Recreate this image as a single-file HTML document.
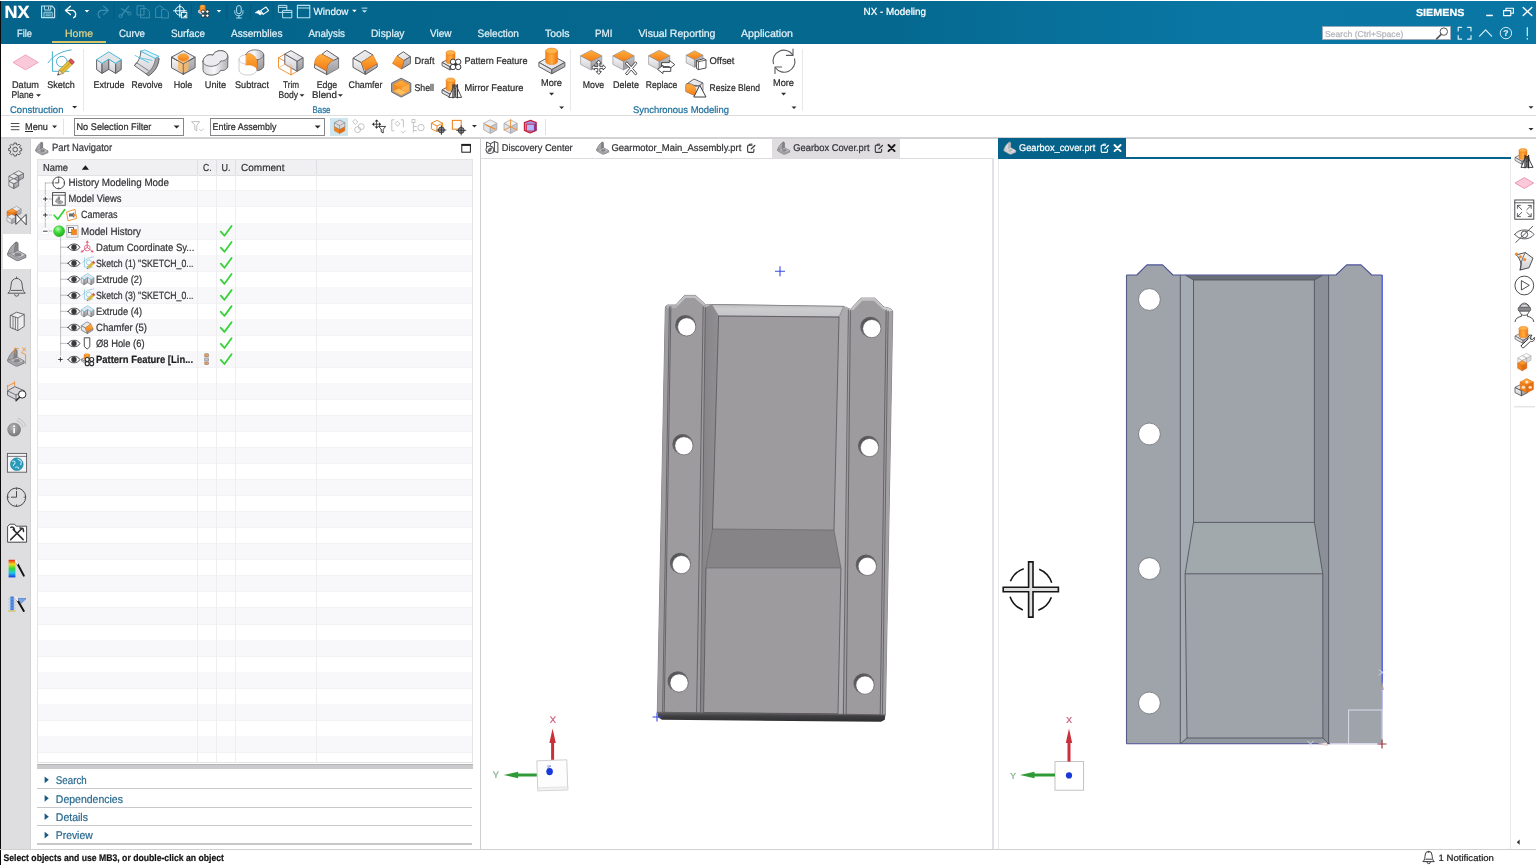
<!DOCTYPE html>
<html lang="en"><head><meta charset="utf-8"><title>NX - Modeling</title>
<style>
html,body{margin:0;padding:0;background:#fff;}
html{overflow:hidden;}
body{width:1536px;height:865px;position:relative;overflow:hidden;font-family:"Liberation Sans",sans-serif;}
#app{position:absolute;left:-8px;top:-8px;width:1552px;height:881px;background:#fff;filter:blur(0.45px);}
#in{position:absolute;left:8px;top:8px;width:1536px;height:865px;}
.b{position:absolute;display:block;}
.t{position:absolute;white-space:nowrap;display:block;transform-origin:0 0;text-rendering:geometricPrecision;line-height:20px;-webkit-text-stroke:0.22px currentColor;}
svg{overflow:visible;}
</style></head><body><div id="app"><div id="in">
<div class="b" style="left:0px;top:0px;width:1536px;height:865px;background:#ffffff;"></div>
<div class="b" style="left:-8px;top:1px;width:8px;height:43px;background:#04648b;"></div>
<div class="b" style="left:1536px;top:1px;width:8px;height:43px;background:#0a76a3;"></div>
<div class="b" style="left:0px;top:1px;width:1536px;height:43px;background:linear-gradient(90deg,#04648b 0%,#05678e 35%,#05698f 58%,#07709b 69%,#0a77a4 81%,#0a76a3 100%);"></div>
<div class="b" style="left:0px;top:0px;width:1536px;height:1px;background:#ffffff;"></div>
<div class="b" style="left:0px;top:115px;width:1544px;height:1px;background:#dcdcdc;"></div>
<div class="b" style="left:0px;top:136.9px;width:1544px;height:1.8px;background:#d3d3d6;"></div>
<div class="b" style="left:-8px;top:1px;width:9px;height:872px;background:#0a0a0a;"></div>
<div class="b" style="left:1px;top:139px;width:29px;height:711px;background:#dedde0;"></div>
<div class="b" style="left:30px;top:139px;width:1px;height:711px;background:#d2d2d2;"></div>
<div class="b" style="left:3.2px;top:233.9px;width:27.8px;height:34.8px;background:#ffffff;"></div>
<div class="b" style="left:0px;top:849px;width:1544px;height:1px;background:#d0d0d0;"></div>
<div class="b" style="left:1px;top:850px;width:1535px;height:15px;background:#ffffff;"></div>
<span class="t " style="left:4px;top:2px;font-size:17.6px;color:#ffffff;font-weight:bold;transform:translateX(0.50px) scaleX(1.0225);">NX</span>
<span class="t " style="left:313px;top:3px;font-size:10.2px;color:#e8f4f9;transform:translateX(0.50px) scaleX(0.9648);">Window</span>
<span class="t " style="left:863px;top:3px;font-size:10.2px;color:#ffffff;transform:translateX(0.55px) scaleX(0.9671);">NX - Modeling</span>
<span class="t " style="left:1415px;top:4px;font-size:10.2px;color:#ffffff;font-weight:bold;transform:translateX(0.90px) scaleX(1.0564);">SIEMENS</span>
<span class="t " style="left:17px;top:24px;font-size:10.7px;color:#e2f1f7;transform:scaleX(0.8701);">File</span>
<span class="t " style="left:65px;top:24px;font-size:10.7px;color:#e4d488;transform:scaleX(0.9811);">Home</span>
<span class="t " style="left:119px;top:24px;font-size:10.7px;color:#e2f1f7;transform:scaleX(0.9110);">Curve</span>
<span class="t " style="left:171px;top:24px;font-size:10.7px;color:#e2f1f7;transform:scaleX(0.9221);">Surface</span>
<span class="t " style="left:231px;top:24px;font-size:10.7px;color:#e2f1f7;transform:scaleX(0.9414);">Assemblies</span>
<span class="t " style="left:308px;top:24px;font-size:10.7px;color:#e2f1f7;transform:translateX(0.50px) scaleX(0.9161);">Analysis</span>
<span class="t " style="left:371px;top:24px;font-size:10.7px;color:#e2f1f7;transform:scaleX(0.9549);">Display</span>
<span class="t " style="left:430px;top:24px;font-size:10.7px;color:#e2f1f7;transform:scaleX(0.9349);">View</span>
<span class="t " style="left:477px;top:24px;font-size:10.7px;color:#e2f1f7;transform:translateX(0.50px) scaleX(0.9429);">Selection</span>
<span class="t " style="left:545px;top:24px;font-size:10.7px;color:#e2f1f7;transform:scaleX(0.9809);">Tools</span>
<span class="t " style="left:595px;top:24px;font-size:10.7px;color:#e2f1f7;transform:scaleX(0.9200);">PMI</span>
<span class="t " style="left:638px;top:24px;font-size:10.7px;color:#e2f1f7;transform:translateX(0.50px) scaleX(0.9832);">Visual Reporting</span>
<span class="t " style="left:741px;top:24px;font-size:10.7px;color:#e2f1f7;transform:scaleX(0.9934);">Application</span>
<div class="b" style="left:52px;top:41px;width:54px;height:1.9px;background:#d8c468;"></div>
<div class="b" style="left:1322px;top:26px;width:129px;height:14px;background:#ffffff;border:1px solid #9ab;box-sizing:border-box;"></div>
<span class="t " style="left:1325px;top:24px;font-size:8.6px;color:#b4b4ba;transform:scaleX(1.0033);">Search (Ctrl+Space)</span>
<span class="t " style="left:1503px;top:23px;font-size:8.6px;color:#d6edf6;font-weight:bold;transform:translateX(0.27px);">?</span>
<span class="t " style="left:12px;top:76px;font-size:9.7px;color:#2b2b2b;transform:scaleX(0.9451);">Datum</span>
<span class="t " style="left:11px;top:86px;font-size:9.7px;color:#2b2b2b;transform:translateX(0.50px) scaleX(0.8868);">Plane</span>
<span class="t " style="left:47px;top:76px;font-size:9.7px;color:#2b2b2b;transform:translateX(0.25px) scaleX(0.9274);">Sketch</span>
<span class="t " style="left:93px;top:76px;font-size:9.7px;color:#2b2b2b;transform:translateX(0.50px) scaleX(0.9274);">Extrude</span>
<span class="t " style="left:131px;top:76px;font-size:9.7px;color:#2b2b2b;transform:translateX(0.50px) scaleX(0.8846);">Revolve</span>
<span class="t " style="left:173px;top:76px;font-size:9.7px;color:#2b2b2b;transform:translateX(0.75px) scaleX(0.9274);">Hole</span>
<span class="t " style="left:204px;top:76px;font-size:9.7px;color:#2b2b2b;transform:translateX(0.75px) scaleX(0.9495);">Unite</span>
<span class="t " style="left:235px;top:76px;font-size:9.7px;color:#2b2b2b;transform:scaleX(0.9413);">Subtract</span>
<span class="t " style="left:283px;top:76px;font-size:9.7px;color:#2b2b2b;transform:scaleX(0.8408);">Trim</span>
<span class="t " style="left:278px;top:86px;font-size:9.7px;color:#2b2b2b;transform:translateX(0.50px) scaleX(0.8820);">Body</span>
<span class="t " style="left:316px;top:76px;font-size:9.7px;color:#2b2b2b;transform:translateX(0.75px) scaleX(0.9050);">Edge</span>
<span class="t " style="left:312px;top:86px;font-size:9.7px;color:#2b2b2b;transform:scaleX(1.0077);">Blend</span>
<span class="t " style="left:348px;top:76px;font-size:9.7px;color:#2b2b2b;transform:translateX(0.50px) scaleX(0.9142);">Chamfer</span>
<span class="t " style="left:414px;top:52px;font-size:9.7px;color:#2b2b2b;transform:translateX(0.50px) scaleX(0.9515);">Draft</span>
<span class="t " style="left:414px;top:79px;font-size:9.7px;color:#2b2b2b;transform:translateX(0.50px) scaleX(0.9041);">Shell</span>
<span class="t " style="left:464px;top:52px;font-size:9.7px;color:#2b2b2b;transform:translateX(0.50px) scaleX(0.9348);">Pattern Feature</span>
<span class="t " style="left:464px;top:79px;font-size:9.7px;color:#2b2b2b;transform:translateX(0.50px) scaleX(0.9603);">Mirror Feature</span>
<span class="t " style="left:541px;top:74px;font-size:9.7px;color:#2b2b2b;transform:scaleX(0.9503);">More</span>
<span class="t " style="left:582px;top:76px;font-size:9.7px;color:#2b2b2b;transform:translateX(0.75px) scaleX(0.9065);">Move</span>
<span class="t " style="left:613px;top:76px;font-size:9.7px;color:#2b2b2b;transform:scaleX(0.9273);">Delete</span>
<span class="t " style="left:645px;top:76px;font-size:9.7px;color:#2b2b2b;transform:translateX(0.75px) scaleX(0.8852);">Replace</span>
<span class="t " style="left:709px;top:52px;font-size:9.7px;color:#2b2b2b;transform:translateX(0.50px) scaleX(0.9729);">Offset</span>
<span class="t " style="left:709px;top:79px;font-size:9.7px;color:#2b2b2b;transform:translateX(0.50px) scaleX(0.8836);">Resize Blend</span>
<span class="t " style="left:773px;top:74px;font-size:9.7px;color:#2b2b2b;transform:scaleX(0.9503);">More</span>
<span class="t " style="left:10px;top:101px;font-size:9.7px;color:#1e6f9e;transform:scaleX(0.9825);">Construction</span>
<span class="t " style="left:312px;top:101px;font-size:9.7px;color:#1e6f9e;transform:translateX(0.50px) scaleX(0.8142);">Base</span>
<span class="t " style="left:633px;top:101px;font-size:9.7px;color:#1e6f9e;transform:scaleX(0.9729);">Synchronous Modeling</span>
<div class="b" style="left:83px;top:49px;width:1px;height:62px;background:#e8e8ec;"></div>
<div class="b" style="left:570px;top:49px;width:1px;height:62px;background:#e8e8ec;"></div>
<div class="b" style="left:802px;top:49px;width:1px;height:62px;background:#e8e8ec;"></div>
<span class="t " style="left:25px;top:118px;font-size:9.7px;color:#2b2b2b;transform:scaleX(0.9480);">Menu</span>
<div class="b" style="left:25px;top:130.8px;width:7.5px;height:0.9px;background:#2b2b2b;"></div>
<div class="b" style="left:63px;top:119px;width:1px;height:16px;background:#e4e4e6;"></div>
<div class="b" style="left:73.5px;top:118.2px;width:110px;height:17.4px;background:#ffffff;border:1px solid #85858a;box-sizing:border-box;"></div>
<span class="t " style="left:76px;top:118px;font-size:9.7px;color:#2b2b2b;transform:translateX(0.50px) scaleX(0.9464);">No Selection Filter</span>
<div class="b" style="left:210px;top:118.2px;width:114.5px;height:17.4px;background:#ffffff;border:1px solid #85858a;box-sizing:border-box;"></div>
<span class="t " style="left:212px;top:118px;font-size:9.7px;color:#2b2b2b;transform:translateX(0.50px) scaleX(0.9203);">Entire Assembly</span>
<div class="b" style="left:330px;top:118px;width:18px;height:18px;background:#cfe6ee;"></div>
<div class="b" style="left:545px;top:119px;width:1px;height:16px;background:#e1e1e1;"></div>
<span class="t " style="left:52px;top:138px;font-size:10.5px;color:#343438;transform:scaleX(0.8971);">Part Navigator</span>
<div class="b" style="left:37px;top:159px;width:436px;height:604px;background:#ffffff;border:1px solid #e4e4e4;box-sizing:border-box;"></div>
<div class="b" style="left:38px;top:160px;width:434px;height:14.5px;background:#f0eff1;"></div>
<div class="b" style="left:38px;top:174.5px;width:434px;height:1px;background:#e2e2e2;"></div>
<div class="b" style="left:38px;top:190.4px;width:434px;height:1px;background:#f3f3f5;"></div>
<div class="b" style="left:38px;top:190.9px;width:434px;height:16px;background:#f8f8fa;"></div>
<div class="b" style="left:38px;top:206.4px;width:434px;height:1px;background:#f3f3f5;"></div>
<div class="b" style="left:38px;top:222.5px;width:434px;height:1px;background:#f3f3f5;"></div>
<div class="b" style="left:38px;top:223.0px;width:434px;height:16px;background:#f8f8fa;"></div>
<div class="b" style="left:38px;top:238.5px;width:434px;height:1px;background:#f3f3f5;"></div>
<div class="b" style="left:38px;top:254.6px;width:434px;height:1px;background:#f3f3f5;"></div>
<div class="b" style="left:38px;top:255.1px;width:434px;height:16px;background:#f8f8fa;"></div>
<div class="b" style="left:38px;top:270.6px;width:434px;height:1px;background:#f3f3f5;"></div>
<div class="b" style="left:38px;top:286.6px;width:434px;height:1px;background:#f3f3f5;"></div>
<div class="b" style="left:38px;top:287.2px;width:434px;height:16px;background:#f8f8fa;"></div>
<div class="b" style="left:38px;top:302.7px;width:434px;height:1px;background:#f3f3f5;"></div>
<div class="b" style="left:38px;top:318.7px;width:434px;height:1px;background:#f3f3f5;"></div>
<div class="b" style="left:38px;top:319.3px;width:434px;height:16px;background:#f8f8fa;"></div>
<div class="b" style="left:38px;top:334.8px;width:434px;height:1px;background:#f3f3f5;"></div>
<div class="b" style="left:38px;top:350.8px;width:434px;height:1px;background:#f3f3f5;"></div>
<div class="b" style="left:38px;top:351.3px;width:434px;height:16px;background:#f8f8fa;"></div>
<div class="b" style="left:38px;top:366.8px;width:434px;height:1px;background:#f3f3f5;"></div>
<div class="b" style="left:38px;top:382.9px;width:434px;height:1px;background:#f3f3f5;"></div>
<div class="b" style="left:38px;top:383.4px;width:434px;height:16px;background:#f8f8fa;"></div>
<div class="b" style="left:38px;top:398.9px;width:434px;height:1px;background:#f3f3f5;"></div>
<div class="b" style="left:38px;top:415.0px;width:434px;height:1px;background:#f3f3f5;"></div>
<div class="b" style="left:38px;top:415.5px;width:434px;height:16px;background:#f8f8fa;"></div>
<div class="b" style="left:38px;top:431.0px;width:434px;height:1px;background:#f3f3f5;"></div>
<div class="b" style="left:38px;top:447.0px;width:434px;height:1px;background:#f3f3f5;"></div>
<div class="b" style="left:38px;top:447.6px;width:434px;height:16px;background:#f8f8fa;"></div>
<div class="b" style="left:38px;top:463.1px;width:434px;height:1px;background:#f3f3f5;"></div>
<div class="b" style="left:38px;top:479.1px;width:434px;height:1px;background:#f3f3f5;"></div>
<div class="b" style="left:38px;top:479.7px;width:434px;height:16px;background:#f8f8fa;"></div>
<div class="b" style="left:38px;top:495.2px;width:434px;height:1px;background:#f3f3f5;"></div>
<div class="b" style="left:38px;top:511.2px;width:434px;height:1px;background:#f3f3f5;"></div>
<div class="b" style="left:38px;top:511.7px;width:434px;height:16px;background:#f8f8fa;"></div>
<div class="b" style="left:38px;top:527.2px;width:434px;height:1px;background:#f3f3f5;"></div>
<div class="b" style="left:38px;top:543.3px;width:434px;height:1px;background:#f3f3f5;"></div>
<div class="b" style="left:38px;top:543.8px;width:434px;height:16px;background:#f8f8fa;"></div>
<div class="b" style="left:38px;top:559.3px;width:434px;height:1px;background:#f3f3f5;"></div>
<div class="b" style="left:38px;top:575.4px;width:434px;height:1px;background:#f3f3f5;"></div>
<div class="b" style="left:38px;top:575.9px;width:434px;height:16px;background:#f8f8fa;"></div>
<div class="b" style="left:38px;top:591.4px;width:434px;height:1px;background:#f3f3f5;"></div>
<div class="b" style="left:38px;top:607.4px;width:434px;height:1px;background:#f3f3f5;"></div>
<div class="b" style="left:38px;top:608.0px;width:434px;height:16px;background:#f8f8fa;"></div>
<div class="b" style="left:38px;top:623.5px;width:434px;height:1px;background:#f3f3f5;"></div>
<div class="b" style="left:38px;top:639.5px;width:434px;height:1px;background:#f3f3f5;"></div>
<div class="b" style="left:38px;top:640.1px;width:434px;height:16px;background:#f8f8fa;"></div>
<div class="b" style="left:38px;top:655.6px;width:434px;height:1px;background:#f3f3f5;"></div>
<div class="b" style="left:38px;top:671.6px;width:434px;height:1px;background:#f3f3f5;"></div>
<div class="b" style="left:38px;top:672.1px;width:434px;height:16px;background:#f8f8fa;"></div>
<div class="b" style="left:38px;top:687.6px;width:434px;height:1px;background:#f3f3f5;"></div>
<div class="b" style="left:38px;top:703.7px;width:434px;height:1px;background:#f3f3f5;"></div>
<div class="b" style="left:38px;top:704.2px;width:434px;height:16px;background:#f8f8fa;"></div>
<div class="b" style="left:38px;top:719.7px;width:434px;height:1px;background:#f3f3f5;"></div>
<div class="b" style="left:38px;top:735.8px;width:434px;height:1px;background:#f3f3f5;"></div>
<div class="b" style="left:38px;top:736.3px;width:434px;height:16px;background:#f8f8fa;"></div>
<div class="b" style="left:38px;top:751.8px;width:434px;height:1px;background:#f3f3f5;"></div>
<div class="b" style="left:197px;top:160px;width:1px;height:602px;background:#eeeef0;"></div>
<div class="b" style="left:216px;top:160px;width:1px;height:602px;background:#eeeef0;"></div>
<div class="b" style="left:235px;top:160px;width:1px;height:602px;background:#eeeef0;"></div>
<div class="b" style="left:316px;top:160px;width:1px;height:602px;background:#eeeef0;"></div>
<div class="b" style="left:197px;top:160px;width:1.2px;height:14.5px;background:#dfdee2;"></div>
<div class="b" style="left:216px;top:160px;width:1.2px;height:14.5px;background:#dfdee2;"></div>
<div class="b" style="left:235px;top:160px;width:1.2px;height:14.5px;background:#dfdee2;"></div>
<div class="b" style="left:316px;top:160px;width:1.2px;height:14.5px;background:#dfdee2;"></div>
<span class="t " style="left:43px;top:159px;font-size:10.1px;color:#343438;transform:scaleX(0.9280);">Name</span>
<span class="t " style="left:203px;top:159px;font-size:10.1px;color:#343438;transform:scaleX(0.8515);">C.</span>
<span class="t " style="left:221px;top:159px;font-size:10.1px;color:#343438;transform:translateX(0.50px) scaleX(0.8911);">U.</span>
<span class="t " style="left:241px;top:159px;font-size:10.1px;color:#343438;transform:scaleX(0.9937);">Comment</span>
<span class="t " style="left:68px;top:173px;font-size:10.5px;color:#343438;transform:translateX(0.50px) scaleX(0.9360);">History Modeling Mode</span>
<span class="t " style="left:68px;top:189px;font-size:10.5px;color:#343438;transform:translateX(0.50px) scaleX(0.8933);">Model Views</span>
<span class="t " style="left:81px;top:205px;font-size:10.5px;color:#343438;transform:scaleX(0.8570);">Cameras</span>
<span class="t " style="left:81px;top:222px;font-size:10.5px;color:#343438;transform:scaleX(0.9349);">Model History</span>
<span class="t " style="left:96px;top:238px;font-size:10.5px;color:#343438;transform:scaleX(0.9073);">Datum Coordinate Sy...</span>
<span class="t " style="left:96px;top:254px;font-size:10.5px;color:#343438;transform:scaleX(0.8297);">Sketch (1) &quot;SKETCH_0...</span>
<span class="t " style="left:96px;top:270px;font-size:10.5px;color:#343438;transform:scaleX(0.8858);">Extrude (2)</span>
<span class="t " style="left:96px;top:286px;font-size:10.5px;color:#343438;transform:scaleX(0.8297);">Sketch (3) &quot;SKETCH_0...</span>
<span class="t " style="left:96px;top:302px;font-size:10.5px;color:#343438;transform:scaleX(0.8858);">Extrude (4)</span>
<span class="t " style="left:96px;top:318px;font-size:10.5px;color:#343438;transform:scaleX(0.9106);">Chamfer (5)</span>
<span class="t " style="left:96px;top:334px;font-size:10.5px;color:#343438;transform:scaleX(0.8938);">Ø8 Hole (6)</span>
<span class="t " style="left:96px;top:350px;font-size:10.5px;color:#1e1e1e;font-weight:bold;transform:scaleX(0.8988);">Pattern Feature [Lin...</span>
<div class="b" style="left:37px;top:764.2px;width:436px;height:4.4px;background:#cbcbcd;border-top:1px solid #b4b4b6;box-sizing:border-box;"></div>
<span class="t " style="left:55px;top:771px;font-size:11.2px;color:#2a6a90;transform:translateX(0.80px) scaleX(0.8708);">Search</span>
<div class="b" style="left:37px;top:787.9px;width:435px;height:1.3px;background:#c8c8ca;"></div>
<span class="t " style="left:55px;top:790px;font-size:11.2px;color:#2a6a90;transform:translateX(0.80px) scaleX(0.9385);">Dependencies</span>
<div class="b" style="left:37px;top:806.5px;width:435px;height:1.3px;background:#c8c8ca;"></div>
<span class="t " style="left:55px;top:808px;font-size:11.2px;color:#2a6a90;transform:translateX(0.80px) scaleX(0.9406);">Details</span>
<div class="b" style="left:37px;top:824.9px;width:435px;height:1.3px;background:#c8c8ca;"></div>
<span class="t " style="left:55px;top:826px;font-size:11.2px;color:#2a6a90;transform:translateX(0.80px) scaleX(0.9264);">Preview</span>
<div class="b" style="left:37px;top:843.3px;width:435px;height:1.3px;background:#c8c8ca;"></div>
<span class="t " style="left:3px;top:849px;font-size:9.6px;color:#141414;font-weight:bold;transform:translateX(0.50px) scaleX(0.9006);">Select objects and use MB3, or double-click an object</span>
<span class="t " style="left:1438px;top:848px;font-size:9.2px;color:#222;transform:translateX(0.50px) scaleX(1.0436);">1 Notification</span>
<div class="b" style="left:479.6px;top:138.6px;width:1.4px;height:711px;background:#cfcfd2;"></div>
<div class="b" style="left:481px;top:157.5px;width:512.6px;height:1.4px;background:#dddbe0;"></div>
<div class="b" style="left:992.2px;top:158px;width:1.4px;height:691px;background:#e3e1e7;"></div>
<div class="b" style="left:772px;top:138.5px;width:128px;height:19.5px;background:#dfdde0;"></div>
<span class="t " style="left:501px;top:139px;font-size:9.8px;color:#333336;transform:translateX(0.70px) scaleX(0.9447);">Discovery Center</span>
<span class="t " style="left:611px;top:139px;font-size:9.8px;color:#333336;transform:translateX(0.40px) scaleX(0.9638);">Gearmotor_Main_Assembly.prt</span>
<span class="t " style="left:793px;top:139px;font-size:9.8px;color:#333336;transform:translateX(0.30px) scaleX(0.9517);">Gearbox Cover.prt</span>
<div class="b" style="left:998px;top:138px;width:128px;height:21px;background:#05628a;"></div>
<div class="b" style="left:998px;top:157.3px;width:513px;height:1.7px;background:#05628a;"></div>
<div class="b" style="left:998px;top:159px;width:1.2px;height:690px;background:#e8e6ec;"></div>
<span class="t " style="left:1019px;top:139px;font-size:9.8px;color:#ffffff;transform:scaleX(0.9465);">Gearbox_cover.prt</span>
<div class="b" style="left:1510.4px;top:159px;width:1px;height:690px;background:#eaeaee;"></div>
<svg class="b" style="left:0;top:0" width="0" height="0"><defs>
<linearGradient id="og" x1="0" y1="0" x2="0" y2="1"><stop offset="0" stop-color="#ffb040"/><stop offset="1" stop-color="#f47c14"/></linearGradient>
<linearGradient id="ogh" x1="0" y1="0" x2="1" y2="0"><stop offset="0" stop-color="#f58414"/><stop offset="0.5" stop-color="#ffad42"/><stop offset="1" stop-color="#ee7410"/></linearGradient>
<linearGradient id="gl" x1="0" y1="0" x2="0" y2="1"><stop offset="0" stop-color="#f6f6f8"/><stop offset="1" stop-color="#cfcfd3"/></linearGradient>
<linearGradient id="gd" x1="0" y1="0" x2="0" y2="1"><stop offset="0" stop-color="#c4c4c8"/><stop offset="1" stop-color="#97979b"/></linearGradient>
<linearGradient id="gt" x1="0" y1="0" x2="1" y2="1"><stop offset="0" stop-color="#f4f4f6"/><stop offset="1" stop-color="#dcdce0"/></linearGradient>
<linearGradient id="glh" x1="0" y1="0" x2="1" y2="0"><stop offset="0" stop-color="#d8d8dc"/><stop offset="0.45" stop-color="#f8f8fa"/><stop offset="1" stop-color="#b0b0b4"/></linearGradient>
<radialGradient id="gball" cx="0.4" cy="0.3" r="0.75"><stop offset="0" stop-color="#b8ffae"/><stop offset="0.45" stop-color="#3fdc3c"/><stop offset="1" stop-color="#1ea31c"/></radialGradient>
<radialGradient id="iball" cx="0.4" cy="0.35" r="0.75"><stop offset="0" stop-color="#b4b4b6"/><stop offset="1" stop-color="#6e6e72"/></radialGradient>
<linearGradient id="rain" x1="0" y1="0" x2="0" y2="1"><stop offset="0" stop-color="#e8201c"/><stop offset="0.25" stop-color="#f4d81c"/><stop offset="0.5" stop-color="#38d838"/><stop offset="0.75" stop-color="#20c8e8"/><stop offset="1" stop-color="#1838e0"/></linearGradient>
</defs></svg>
<svg class="b" style="left:0px;top:0px;" width="1536" height="865" viewBox="0 0 1536 865"><polygon points="13.0,62.4 25.5,54.9 38.2,62.4 25.5,69.8" fill="#f9c9da" stroke="#ee9cba" stroke-width="0.9" stroke-linejoin="round" /><g transform="translate(46,49) scale(1.0)"><path d="M6.4 2.8V22.3H22.8" fill="none" stroke="#38a6c6" stroke-width="0.9" stroke-linejoin="round" stroke-linecap="round" /><path d="M2.1 13.8C7 7 15 2 25.2 0.9" fill="none" stroke="#38a6c6" stroke-width="0.9" stroke-linejoin="round" stroke-linecap="round" /><circle cx="15.8" cy="12.6" r="5.3" fill="none" stroke="#38a6c6" stroke-width="0.9"/><g transform="translate(11.5,26.3) rotate(-44.5)"><path d="M0 0L5.2 -2.6V2.6z" fill="#efe2c8" stroke="#5a4a38" stroke-width="0.5"/><path d="M0 0L2 -1V1z" fill="#3a3a3a"/><rect x="5.2" y="-2.6" width="12.8" height="5.2" fill="#e9c63c" stroke="#8a6a18" stroke-width="0.5"/><rect x="5.2" y="-0.9" width="12.8" height="1.8" fill="#d8ac28"/><rect x="18" y="-2.6" width="3.4" height="5.2" rx="0.8" fill="#d9525c" stroke="#8c2c34" stroke-width="0.5"/></g></g><g transform="translate(96.6,51.6) scale(1.0)"><polygon points="0.0,8.0 5.4,11.8 5.4,21.8 0.0,18.0" fill="url(#gl)" stroke="#5a5a5e" stroke-width="0.95" stroke-linejoin="round" /><polygon points="5.4,11.8 12.2,7.4 12.2,17.8 5.4,21.8" fill="url(#gd)" stroke="#5a5a5e" stroke-width="0.95" stroke-linejoin="round" /><polygon points="12.2,7.4 19.1,11.8 19.1,21.8 12.2,17.8" fill="url(#gl)" stroke="#5a5a5e" stroke-width="0.95" stroke-linejoin="round" /><polygon points="19.1,11.8 24.6,8.0 24.6,18.0 19.1,21.8" fill="url(#gd)" stroke="#5a5a5e" stroke-width="0.95" stroke-linejoin="round" /><polygon points="0.0,8.0 12.2,0.2 24.6,8.0 19.1,11.8 12.2,7.4 5.4,11.8" fill="#e6e6ea" stroke="#46bfe0" stroke-width="1.0" stroke-linejoin="round" /></g><path d="M141 51.2L159 58.6C158.4 66 154.4 72.2 148.6 75.6L134.4 65.6C138.4 62 140.6 57 141 51.2z" fill="url(#gl)" stroke="#5a5a5e" stroke-width="0.9" stroke-linejoin="round" stroke-linecap="round" /><path d="M159 58.6C158.4 66 154.4 72.2 148.6 75.6L146.2 73.9C151.6 70.4 155 64.8 155.6 57.2z" fill="#a2a2a6" stroke="#5a5a5e" stroke-width="0.7" stroke-linejoin="round" stroke-linecap="round" /><path d="M134.4 65.6L136.4 62.6L148.4 70.6" fill="none" stroke="#5a5a5e" stroke-width="0.7" stroke-linejoin="round" stroke-linecap="round" /><path d="M141 51.2L144.8 49.9L159 56.4L155.4 58.2z" fill="#dff2f8" stroke="#46bfe0" stroke-width="0.9" stroke-linejoin="round" stroke-linecap="round" /><path d="M135 55.4L148.6 62.6M139 57.6L152 60.4" fill="none" stroke="#46bfe0" stroke-width="0.8" stroke-linejoin="round" stroke-linecap="round" /><polygon points="171.5,57.2 183.3,63.8 183.3,74.4 171.5,67.8" fill="url(#gl)" stroke="#5a5a5e" stroke-width="0.95" stroke-linejoin="round" /><polygon points="195.1,57.2 183.3,63.8 183.3,74.4 195.1,67.8" fill="url(#gd)" stroke="#5a5a5e" stroke-width="0.95" stroke-linejoin="round" /><polygon points="171.5,57.2 183.3,50.6 195.1,57.2 183.3,63.8" fill="url(#gt)" stroke="#5a5a5e" stroke-width="0.95" stroke-linejoin="round" /><path d="M178 57.6v11.4a5.3 3.4 0 0 0 10.6 0v-11.4z" fill="#f6b86a" opacity="0.85"/><ellipse cx="183.3" cy="57.3" rx="5.3" ry="3.6" fill="url(#og)" stroke="#e8821c" stroke-width="0.5"/><polyline points="171.5,57.2 183.3,63.8 195.1,57.2" fill="none" stroke="#5a5a5e" stroke-width="0.7" stroke-linejoin="round" stroke-linecap="round" /><polyline points="183.3,63.8 183.3,74.4" fill="none" stroke="#5a5a5e" stroke-width="0.7" stroke-linejoin="round" stroke-linecap="round" /><path d="M203 61.6C203 56.6 208 53.6 213 55.2C214.6 50.2 223 49 226.6 53.2C228.6 55.6 228 58.6 227.8 60V66C227.8 69 224 71 220.6 70.4C219 74.6 211 76.6 206 74C203.6 72.8 203 71 203 69.6z" fill="url(#glh)" stroke="#5a5a5e" stroke-width="0.9" stroke-linejoin="round" stroke-linecap="round" /><path d="M203 61.6C203 56.6 208 53.6 213 55.2C214.6 50.2 223 49 226.6 53.2C229.4 57 226 61.4 220.6 61C219.4 65.6 211.4 67.6 206.4 65.4C204 64.4 203 63 203 61.6z" fill="#ececf0" stroke="#5a5a5e" stroke-width="0.8" stroke-linejoin="round" stroke-linecap="round" /><ellipse cx="247.8" cy="59.4" rx="8.8" ry="4.9" fill="#fff" stroke="#c2c2c6" stroke-width="0.8"/><path d="M239 59.4V70.2A8.8 4.9 0 0 0 256.6 70.2V59.4" fill="none" stroke="#c2c2c6" stroke-width="0.8" stroke-linejoin="round" stroke-linecap="round" /><path d="M246.2 54.4C246.6 51.4 251 49.8 255.2 49.9C260 50 263.6 52 263.7 54.8V65.6C263.6 68 261 70 257.6 70.6V59.6C252 60 247.4 57.6 246.2 54.4z" fill="url(#glh)" stroke="#5a5a5e" stroke-width="0.8" stroke-linejoin="round" stroke-linecap="round" /><path d="M257.6 59.8C260.8 59.2 263.4 57.4 263.7 54.8V65.6C263.6 68 261 70 257.6 70.6z" fill="url(#gd)" stroke="#5a5a5e" stroke-width="0.7" stroke-linejoin="round" stroke-linecap="round" /><path d="M246.2 54.4C248 52.6 252.6 54 255 57C256.8 59.4 257.4 62 257.6 70.6C256.4 66 250.6 64.4 246.2 65.2z" fill="url(#og)" stroke="#e8801a" stroke-width="0.5" stroke-linejoin="round" stroke-linecap="round" /><polyline points="278.5,57.7 284.8,54.1" fill="none" stroke="#f08a28" stroke-width="0.9" stroke-linejoin="round" stroke-linecap="round" /><polyline points="278.5,57.7 291.0,64.8 297.1,61.2" fill="none" stroke="#f08a28" stroke-width="0.9" stroke-linejoin="round" stroke-linecap="round" /><polyline points="278.5,57.7 278.5,67.8 291.0,74.9 297.1,71.3" fill="none" stroke="#f08a28" stroke-width="0.9" stroke-linejoin="round" stroke-linecap="round" /><polyline points="291.0,64.8 291.0,74.9" fill="none" stroke="#f08a28" stroke-width="0.9" stroke-linejoin="round" stroke-linecap="round" /><polyline points="278.5,67.8 284.8,64.2" fill="none" stroke="#f5b06a" stroke-width="0.7" stroke-linejoin="round" stroke-linecap="round" /><polygon points="284.8,54.1 297.1,61.2 297.1,71.3 284.8,64.2" fill="url(#gl)" stroke="#5a5a5e" stroke-width="0.9" stroke-linejoin="round" /><polygon points="297.1,61.2 303.1,57.7 303.1,67.8 297.1,71.3" fill="url(#gd)" stroke="#5a5a5e" stroke-width="0.9" stroke-linejoin="round" /><polygon points="284.8,54.1 291.0,50.6 303.1,57.7 297.1,61.2" fill="url(#gt)" stroke="#5a5a5e" stroke-width="0.9" stroke-linejoin="round" /><polyline points="291.0,64.8 291.0,74.9" fill="none" stroke="#f5a050" stroke-width="0.8" stroke-linejoin="round" stroke-linecap="round" opacity="0.8"/><polyline points="284.8,64.2 291.0,67.9" fill="none" stroke="#f5b06a" stroke-width="0.6" stroke-linejoin="round" stroke-linecap="round" /><polygon points="314.6,64.0 326.6,70.6 326.6,74.5 314.6,68.0" fill="url(#gl)" stroke="#5a5a5e" stroke-width="0.95" stroke-linejoin="round" /><path d="M326.6 74.5V70.6C326.6 64 331 59.6 338.6 58V67.8z" fill="url(#gd)" stroke="#5a5a5e" stroke-width="0.8" stroke-linejoin="round" stroke-linecap="round" /><polygon points="322.0,54.2 326.8,50.4 338.6,58.0 333.6,60.4" fill="url(#gt)" stroke="#5a5a5e" stroke-width="0.95" stroke-linejoin="round" /><path d="M314.6 64C314.6 58 318 55 322 54.2L333.6 60.4C329.4 61.6 326.6 65 326.6 70.6z" fill="url(#og)" stroke="#d8721a" stroke-width="0.6" stroke-linejoin="round" stroke-linecap="round" /><polygon points="353.0,58.2 365.0,50.3 373.0,55.0 361.2,62.6" fill="url(#gt)" stroke="#5a5a5e" stroke-width="0.95" stroke-linejoin="round" /><polygon points="353.0,58.2 361.2,62.6 365.4,74.5 353.0,67.4" fill="url(#gl)" stroke="#5a5a5e" stroke-width="0.95" stroke-linejoin="round" /><polygon points="365.4,74.5 377.2,67.0 377.2,63.6 365.4,70.6" fill="url(#gd)" stroke="#5a5a5e" stroke-width="0.95" stroke-linejoin="round" /><polygon points="361.2,62.6 373.0,55.0 377.2,63.6 365.4,70.6" fill="url(#og)" stroke="#d8721a" stroke-width="0.6" stroke-linejoin="round" /><polygon points="397.0,56.0 403.4,51.8 410.4,56.6 404.0,60.6" fill="url(#gt)" stroke="#5a5a5e" stroke-width="0.95" stroke-linejoin="round" /><polygon points="404.0,60.6 410.4,56.6 410.4,63.6 401.4,69.0" fill="url(#gd)" stroke="#5a5a5e" stroke-width="0.95" stroke-linejoin="round" /><polygon points="397.0,56.0 404.0,60.6 401.4,69.0 392.4,63.4" fill="url(#og)" stroke="#d8721a" stroke-width="0.6" stroke-linejoin="round" /><polygon points="391.6,83.2 401.2,78.2 410.8,83.2 410.8,92.0 401.2,97.1 391.6,92.0" fill="#a8a8ac" stroke="#5a5a5e" stroke-width="0.9" stroke-linejoin="round" /><polygon points="393.2,84.2 401.2,80.0 409.2,84.2 409.2,91.0 401.2,95.3 393.2,91.0" fill="url(#og)" stroke="#c86414" stroke-width="0.5" stroke-linejoin="round" /><polygon points="393.2,84.2 401.2,88.0 401.2,95.3 393.2,91.0" fill="#f28a1e" stroke="none" stroke-width="0" stroke-linejoin="round" /><polygon points="401.2,88.0 409.2,84.2 409.2,91.0 401.2,95.3" fill="#ffad48" stroke="none" stroke-width="0" stroke-linejoin="round" /><polygon points="393.2,91.0 399.0,88.4 406.6,92.4 401.2,95.3" fill="#ffc060" stroke="#e88a28" stroke-width="0.4" stroke-linejoin="round" /><polygon points="442.0,62.4 450.0,58.4 458.0,62.4 450.0,66.8" fill="url(#gt)" stroke="#5a5a5e" stroke-width="0.95" stroke-linejoin="round" /><polygon points="442.0,62.4 450.0,66.8 450.0,70.0 442.0,65.6" fill="url(#gl)" stroke="#5a5a5e" stroke-width="0.95" stroke-linejoin="round" /><polygon points="450.0,66.8 458.0,62.4 458.0,65.6 450.0,70.0" fill="url(#gd)" stroke="#5a5a5e" stroke-width="0.95" stroke-linejoin="round" /><path d="M446.20000000000005 52.8v8.6a4.4 2.2 0 0 0 8.8 0v-8.6z" fill="url(#ogh)" stroke="#e07410" stroke-width="0.5"/><ellipse cx="450.6" cy="52.8" rx="4.4" ry="2.2" fill="#ffb248" stroke="#e07410" stroke-width="0.5"/><circle cx="453" cy="61.8" r="2.7" fill="#fff" stroke="#3c3c40" stroke-width="1"/><circle cx="458.2" cy="61.8" r="2.7" fill="#fff" stroke="#3c3c40" stroke-width="1"/><circle cx="453" cy="67" r="2.7" fill="#fff" stroke="#3c3c40" stroke-width="1"/><circle cx="458.2" cy="67" r="2.7" fill="#fff" stroke="#3c3c40" stroke-width="1"/><circle cx="455.6" cy="64.4" r="1.1" fill="#2c2c30"/><polygon points="442.0,89.8 450.0,85.8 458.0,89.8 450.0,94.2" fill="url(#gt)" stroke="#5a5a5e" stroke-width="0.95" stroke-linejoin="round" /><polygon points="442.0,89.8 450.0,94.2 450.0,97.4 442.0,93.0" fill="url(#gl)" stroke="#5a5a5e" stroke-width="0.95" stroke-linejoin="round" /><polygon points="450.0,94.2 458.0,89.8 458.0,93.0 450.0,97.4" fill="url(#gd)" stroke="#5a5a5e" stroke-width="0.95" stroke-linejoin="round" /><path d="M446.20000000000005 80.2v8.6a4.4 2.2 0 0 0 8.8 0v-8.6z" fill="url(#ogh)" stroke="#e07410" stroke-width="0.5"/><ellipse cx="450.6" cy="80.2" rx="4.4" ry="2.2" fill="#ffb248" stroke="#e07410" stroke-width="0.5"/><path d="M454.4 85L448.8 97.4H454.4zM456 85L461.6 97.4H456z" fill="#fff" stroke="#3c3c40" stroke-width="0.9" stroke-linejoin="round" stroke-linecap="round" /><path d="M453 84.6V97.8M457.4 84.6V97.8" fill="none" stroke="#3c3c40" stroke-width="1.3" stroke-linejoin="round" stroke-linecap="round" /><polygon points="538.9,62.4 551.8,55.4 564.9,62.4 551.8,69.6" fill="url(#gt)" stroke="#5a5a5e" stroke-width="0.95" stroke-linejoin="round" /><polygon points="538.9,62.4 551.8,69.6 551.8,73.8 538.9,66.6" fill="url(#gl)" stroke="#5a5a5e" stroke-width="0.95" stroke-linejoin="round" /><polygon points="551.8,69.6 564.9,62.4 564.9,66.6 551.8,73.8" fill="url(#gd)" stroke="#5a5a5e" stroke-width="0.95" stroke-linejoin="round" /><path d="M545.6 51v10.6a6 2.9 0 0 0 12 0v-10.6z" fill="url(#ogh)" stroke="#e07410" stroke-width="0.5"/><ellipse cx="551.6" cy="51" rx="6" ry="2.9" fill="#ffb248" stroke="#e07410" stroke-width="0.5"/><polygon points="580.6,55.8 591.2,61.4 591.2,70.0 580.6,64.4" fill="url(#gl)" stroke="#8a8a8e" stroke-width="0.6" stroke-linejoin="round" /><polygon points="601.8,55.8 591.2,61.4 591.2,70.0 601.8,64.4" fill="url(#gd)" stroke="#8a8a8e" stroke-width="0.6" stroke-linejoin="round" /><polygon points="580.6,55.8 591.2,50.2 601.8,55.8 591.2,61.4" fill="url(#og)" stroke="#8a8a8e" stroke-width="0.6" stroke-linejoin="round" /><path d="M598.8 60.4l2.6 2.8h-1.6v3.2h3.2v-1.6l2.8 2.6l-2.8 2.6v-1.6h-3.2v3.2h1.6l-2.6 2.8l-2.6-2.8h1.6v-3.2h-3.2v1.6l-2.8-2.6l2.8-2.6v1.6h3.2v-3.2h-1.6z" fill="#fff" stroke="#3c3c40" stroke-width="0.9" stroke-linejoin="round" stroke-linecap="round" /><polygon points="612.9,55.8 623.5,61.4 623.5,70.0 612.9,64.4" fill="url(#gl)" stroke="#8a8a8e" stroke-width="0.6" stroke-linejoin="round" /><polygon points="634.1,55.8 623.5,61.4 623.5,70.0 634.1,64.4" fill="url(#gd)" stroke="#8a8a8e" stroke-width="0.6" stroke-linejoin="round" /><polygon points="612.9,55.8 623.5,50.2 634.1,55.8 623.5,61.4" fill="url(#og)" stroke="#8a8a8e" stroke-width="0.6" stroke-linejoin="round" /><path d="M625.4 63.2l1.6-1.4l4.2 5l4.2-5l1.6 1.4l-4.4 5.2l4.4 5.2l-1.6 1.4l-4.2-5l-4.2 5l-1.6-1.4l4.4-5.2z" fill="#fff" stroke="#3c3c40" stroke-width="0.9" stroke-linejoin="round" stroke-linecap="round" /><polygon points="648.6,55.8 659.2,61.4 659.2,70.0 648.6,64.4" fill="url(#gl)" stroke="#8a8a8e" stroke-width="0.6" stroke-linejoin="round" /><polygon points="669.8,55.8 659.2,61.4 659.2,70.0 669.8,64.4" fill="url(#gd)" stroke="#8a8a8e" stroke-width="0.6" stroke-linejoin="round" /><polygon points="648.6,55.8 659.2,50.2 669.8,55.8 659.2,61.4" fill="url(#og)" stroke="#8a8a8e" stroke-width="0.6" stroke-linejoin="round" /><path d="M662 62.6h7.4v-2.2l5.4 4.2l-5.4 4.2v-2.2h-7.4z" fill="#fff" stroke="#3c3c40" stroke-width="0.9" stroke-linejoin="round" stroke-linecap="round" /><path d="M670.4 67.4h-7.4v-2.2l-5.4 4.2l5.4 4.2v-2.2h7.4z" fill="#fff" stroke="#3c3c40" stroke-width="0.9" stroke-linejoin="round" stroke-linecap="round" /><polygon points="686.2,55.2 694.6,59.6 694.6,67.2 686.2,62.8" fill="url(#gl)" stroke="#8a8a8e" stroke-width="0.6" stroke-linejoin="round" /><polygon points="703.0,55.2 694.6,59.6 694.6,67.2 703.0,62.8" fill="url(#gd)" stroke="#8a8a8e" stroke-width="0.6" stroke-linejoin="round" /><polygon points="686.2,55.2 694.6,50.8 703.0,55.2 694.6,59.6" fill="url(#og)" stroke="#8a8a8e" stroke-width="0.6" stroke-linejoin="round" /><polygon points="696.4,60.6 704.0,58.6 706.0,60.0 706.0,68.0 698.4,69.6 696.4,68.4" fill="#fff" stroke="#3c3c40" stroke-width="0.9" stroke-linejoin="round" /><polyline points="696.4,60.6 698.4,61.8 698.4,69.6" fill="none" stroke="#3c3c40" stroke-width="0.8" stroke-linejoin="round" stroke-linecap="round" /><polyline points="698.4,61.8 706.0,60.0" fill="none" stroke="#3c3c40" stroke-width="0.8" stroke-linejoin="round" stroke-linecap="round" /><polygon points="686.2,84.4 694.0,79.0 703.0,83.0 699.0,86.0" fill="url(#gt)" stroke="#5a5a5e" stroke-width="0.95" stroke-linejoin="round" /><path d="M686.2 84.4C688 82.6 692 83.4 695.2 86.6L699 86L703 83V90.6L695.6 96L686.2 91.6z" fill="url(#gl)" stroke="#5a5a5e" stroke-width="0.7" stroke-linejoin="round" stroke-linecap="round" /><path d="M686.2 84.4C689.6 83.4 693.6 85 695.6 88.4V96L686.2 91.6z" fill="url(#og)" stroke="#d8721a" stroke-width="0.5" stroke-linejoin="round" stroke-linecap="round" /><path d="M699.6 85.6L693.8 97h11.8z" fill="#fff" stroke="#3c3c40" stroke-width="1.0" stroke-linejoin="round" stroke-linecap="round" /><path d="M773.4 63.6A10.8 10.8 0 0 1 792.6 54.6" fill="none" stroke="#5a5a5e" stroke-width="1.1" stroke-linejoin="round" stroke-linecap="round" /><path d="M786.4 55.4H793V49" fill="none" stroke="#5a5a5e" stroke-width="1.1" stroke-linejoin="round" stroke-linecap="round" /><path d="M794.6 58.8A10.8 10.8 0 0 1 775.4 67.8" fill="none" stroke="#5a5a5e" stroke-width="1.1" stroke-linejoin="round" stroke-linecap="round" /><path d="M781.6 67H775V73.4" fill="none" stroke="#5a5a5e" stroke-width="1.1" stroke-linejoin="round" stroke-linecap="round" /><path d="M36.0 94.2h5.0l-2.5 2.6z" fill="#2b2b2b"/><path d="M299.5 94.2h5.0l-2.5 2.6z" fill="#2b2b2b"/><path d="M337.9 94.2h5.0l-2.5 2.6z" fill="#2b2b2b"/><path d="M549.1 92.8h5.0l-2.5 2.6z" fill="#2b2b2b"/><path d="M781.1 92.8h5.0l-2.5 2.6z" fill="#2b2b2b"/><path d="M72.1 106h5.0l-2.5 2.6z" fill="#2b2b2b"/><path d="M559.1 106.4h5.0l-2.5 2.6z" fill="#2b2b2b"/><path d="M791.5 106.4h5.0l-2.5 2.6z" fill="#2b2b2b"/><path d="M1528.5 106.2h5.0l-2.5 2.6z" fill="#2b2b2b"/><path d="M1528.5 128h5.0l-2.5 2.6z" fill="#2b2b2b"/><path d="M52.2 125.6h4.8l-2.4 2.6z" fill="#2b2b2b"/><path d="M173.6 125.6h6l-3 3z" fill="#2b2b2b"/><path d="M314.6 125.6h6l-3 3z" fill="#2b2b2b"/><path d="M472.0 125h4.8l-2.4 2.6z" fill="#2b2b2b"/><path d="M1519.6 839.600l-2.800 2.600l2.800 2.600z" fill="#2b2b2b" stroke="none" stroke-width="0" stroke-linejoin="round" stroke-linecap="round" /><path d="M41.6 6h10.4l2.6 2.6v9h-13z" fill="none" stroke="#b9e2f0" stroke-width="1.2" stroke-linejoin="round" stroke-linecap="round" /><path d="M44.4 6.2v3.8h6.4V6.2M48.6 7v2" fill="none" stroke="#b9e2f0" stroke-width="1.0" stroke-linejoin="round" stroke-linecap="round" /><path d="M44 17.4v-5.2h8.2v5.2M45.8 14h4.6M45.8 15.8h4.6" fill="none" stroke="#b9e2f0" stroke-width="0.9" stroke-linejoin="round" stroke-linecap="round" /><rect x="58.8" y="4" width="1" height="15" fill="#045a7e"/><rect x="113.2" y="4" width="1" height="15" fill="#045a7e"/><rect x="191.0" y="4" width="1" height="15" fill="#045a7e"/><rect x="226.3" y="4" width="1" height="15" fill="#045a7e"/><rect x="250.1" y="4" width="1" height="15" fill="#045a7e"/><rect x="272.7" y="4" width="1" height="15" fill="#045a7e"/><path d="M70.4 6.2L65.4 10.4L70.4 14.6M65.8 10.4H73A4.6 4.2 0 0 1 73.6 17.8" fill="none" stroke="#ffffff" stroke-width="1.3" stroke-linejoin="round" stroke-linecap="round" /><path d="M84.60000000000001 10h4.6l-2.3 2.4z" fill="#ffffff"/><path d="M103.6 6.2L108.4 10.4L103.6 14.6M108 10.4H100.8A4.6 4.2 0 0 0 100.2 17.8" fill="none" stroke="#3b8fb0" stroke-width="1.2" stroke-linejoin="round" stroke-linecap="round" /><path d="M128.6 6.4L121.4 15.4M121.4 8.8L128.4 12.6" fill="none" stroke="#3b8fb0" stroke-width="1.1" stroke-linejoin="round" stroke-linecap="round" /><circle cx="120.6" cy="16" r="1.6" fill="none" stroke="#3b8fb0" stroke-width="1"/><circle cx="129.4" cy="13.4" r="1.6" fill="none" stroke="#3b8fb0" stroke-width="1"/><path d="M137.4 5.8h6.6v9.2h-6.6zM141 8.6h5.4l3 2.8v6.4h-8.4z" fill="none" stroke="#3b8fb0" stroke-width="1.0" stroke-linejoin="round" stroke-linecap="round" /><path d="M155.6 17.4V8.4l4-2.8l4 2.8M161.6 17.6V9.4h4.2l2.6 2.6v5.6z M155.6 17.4h6" fill="none" stroke="#3b8fb0" stroke-width="1.0" stroke-linejoin="round" stroke-linecap="round" /><circle cx="179.8" cy="10.8" r="4.3" fill="none" stroke="#ffffff" stroke-width="1"/><path d="M173.6 10.8h12.6M179.8 4.6v12.4" fill="none" stroke="#ffffff" stroke-width="1.0" stroke-linejoin="round" stroke-linecap="round" /><rect x="181.4" y="12.4" width="5.4" height="5.4" fill="#05668d" stroke="#ffffff" stroke-width="0.9"/><path d="M186 14.2v2.8h-2.8z" fill="#ffffff"/><path d="M198 10.4l4-2.2l4 2.2l-4 2.4z" fill="#e8e8ec"/><path d="M198 10.4v2.2l4 2.4v-2.2z" fill="#c8c8cc"/><path d="M200.0 6.2v4.4a2.6 1.2 0 0 0 5.2 0v-4.4z" fill="url(#ogh)" stroke="#e07410" stroke-width="0.5"/><ellipse cx="202.6" cy="6.2" rx="2.6" ry="1.2" fill="#ffb248" stroke="#e07410" stroke-width="0.5"/><circle cx="203" cy="11.6" r="1.7" fill="#fff" stroke="#2c2c30" stroke-width="0.9"/><circle cx="207.4" cy="11.6" r="1.7" fill="#fff" stroke="#2c2c30" stroke-width="0.9"/><circle cx="203" cy="15.6" r="1.7" fill="#fff" stroke="#2c2c30" stroke-width="0.9"/><circle cx="207.4" cy="15.6" r="1.7" fill="#fff" stroke="#2c2c30" stroke-width="0.9"/><path d="M216.7 10h4.6l-2.3 2.4z" fill="#ffffff"/><rect x="236.6" y="5.6" width="4.6" height="8.2" rx="2.3" fill="none" stroke="#b9e2f0" stroke-width="1"/><path d="M234.8 10.6v1a4.1 4.1 0 0 0 8.2 0v-1M238.9 15.8v2.2M236.4 18h5" fill="none" stroke="#b9e2f0" stroke-width="0.9" stroke-linejoin="round" stroke-linecap="round" /><path d="M260.6 10.6l5.4-3.6l2.6 3.6l-5.4 3.8z" fill="none" stroke="#ffffff" stroke-width="1.1" stroke-linejoin="round" stroke-linecap="round" /><path d="M255.4 12.6l3.6-2.4l2.8 3.6l-1.8 1.2l-1.8-1.6z" fill="#ffffff" stroke="#ffffff" stroke-width="0.6" stroke-linejoin="round" stroke-linecap="round" /><path d="M278.8 5.4h8v7h-8zM278.8 7.4h8" fill="#05668d" stroke="#b9e2f0" stroke-width="1.0" stroke-linejoin="round" stroke-linecap="round" /><path d="M283 10.4h8.8v7.4H283zM283 12.4h8.8" fill="#05668d" stroke="#b9e2f0" stroke-width="1.0" stroke-linejoin="round" stroke-linecap="round" /><path d="M297.4 5.4h12.4v12.4h-12.4zM297.4 8h12.4" fill="none" stroke="#b9e2f0" stroke-width="1.1" stroke-linejoin="round" stroke-linecap="round" /><path d="M352.09999999999997 9.8h4.6l-2.3 2.4z" fill="#ffffff"/><rect x="361.6" y="7.6" width="5.8" height="1" fill="#b9e2f0"/><path d="M361.9 10.2h5.2l-2.6 2.6z" fill="#b9e2f0"/><rect x="1486.2" y="14.7" width="6.6" height="1.5" fill="#ffffff"/><path d="M1503.6 10.6h7.2v5h-7.2zM1506 10.4V8.2h7.4v5h-2.4" fill="none" stroke="#ffffff" stroke-width="1.1" stroke-linejoin="round" stroke-linecap="round" /><path d="M1523.2 7.4l8.6 8M1531.8 7.4l-8.6 8" fill="none" stroke="#ffffff" stroke-width="1.4" stroke-linejoin="round" stroke-linecap="round" /><circle cx="1443.8" cy="31.6" r="3.7" fill="#fff" stroke="#555" stroke-width="1"/><path d="M1441.2 34.4l-4.6 4.4" fill="none" stroke="#555" stroke-width="1.6" stroke-linejoin="round" stroke-linecap="round" /><path d="M1458.2 31v-3.6h3.4M1467.6 27.4h3.4V31M1471 35.6v3.6h-3.4M1461.6 39.2h-3.4v-3.6" fill="none" stroke="#d6edf6" stroke-width="1.2" stroke-linejoin="round" stroke-linecap="round" /><path d="M1479.6 36.2l6-6.4l6 6.4" fill="none" stroke="#d6edf6" stroke-width="1.2" stroke-linejoin="round" stroke-linecap="round" /><circle cx="1505.9" cy="33.1" r="5.7" fill="none" stroke="#d6edf6" stroke-width="1"/><rect x="1526.7" y="27.2" width="1.2" height="9" fill="#d6edf6"/><rect x="1526.7" y="38" width="1.2" height="1.6" fill="#d6edf6"/><path d="M11.2 123.5h7.800M11.2 126.600h7.800M11.2 129.700h7.800" fill="none" stroke="#3a3a3a" stroke-width="0.9" stroke-linejoin="round" stroke-linecap="round" /><path d="M192 121.6h7.6l-2.8 4v5.4l-2 -1.4v-4z" fill="none" stroke="#b8b8bc" stroke-width="0.9" stroke-linejoin="round" stroke-linecap="round" /><path d="M199.4 129.2l1.8 1.8l2.4-2" fill="none" stroke="#b8b8bc" stroke-width="0.8" stroke-linejoin="round" stroke-linecap="round" /><polygon points="334.4,126.6 339.6,129.4 339.6,133.6 334.4,130.8" fill="#f4821a" stroke="#c86414" stroke-width="0.4" stroke-linejoin="round" /><polygon points="339.6,129.4 344.8,126.6 344.8,130.8 339.6,133.6" fill="#e86c0e" stroke="#c86414" stroke-width="0.4" stroke-linejoin="round" /><polygon points="334.4,122.8 339.6,120.0 344.8,122.8 344.8,126.6 339.6,129.4 334.4,126.6" fill="#dcdce0" stroke="#7a7a7e" stroke-width="0.6" stroke-linejoin="round" /><polyline points="334.4,122.8 339.6,125.6 344.8,122.8" fill="none" stroke="#7a7a7e" stroke-width="0.6" stroke-linejoin="round" stroke-linecap="round" /><polyline points="339.6,125.6 339.6,129.4" fill="none" stroke="#7a7a7e" stroke-width="0.6" stroke-linejoin="round" stroke-linecap="round" /><circle cx="357.6" cy="129.6" r="3" fill="none" stroke="#bcbcc0" stroke-width="0.9"/><circle cx="361.2" cy="126.6" r="3" fill="none" stroke="#bcbcc0" stroke-width="0.9"/><path d="M355.4 119.6l2.4 2.4l-2.4 2.4l-2.4-2.4z" fill="none" stroke="#bcbcc0" stroke-width="0.9" stroke-linejoin="round" stroke-linecap="round" /><path d="M376.6 119.4l2 2.2h-4zM376.6 128.8l2-2.2h-4zM372 124.2l2.2-2v4zM381.2 124.2l-2.2-2v4z" fill="#2c2c30" stroke="none" stroke-width="0" stroke-linejoin="round" stroke-linecap="round" /><path d="M376.6 121v6.4M373.6 124.2h6" fill="none" stroke="#2c2c30" stroke-width="0.8" stroke-linejoin="round" stroke-linecap="round" /><path d="M378.8 126.4h6.8l-2.4 3v3.6l-2-1.2v-2.4z" fill="#fff" stroke="#2c2c30" stroke-width="0.9" stroke-linejoin="round" stroke-linecap="round" /><path d="M394 119.8h-2.2v11h2.2M401.2 119.8h2.2v7" fill="none" stroke="#bcbcc0" stroke-width="0.9" stroke-linejoin="round" stroke-linecap="round" /><path d="M397.6 121.4l2.2 2.4l-2.2 2.4l-2.2-2.4z" fill="none" stroke="#bcbcc0" stroke-width="0.9" stroke-linejoin="round" stroke-linecap="round" /><path d="M401 131.4l2 1.6l2-2.4" fill="none" stroke="#bcbcc0" stroke-width="0.8" stroke-linejoin="round" stroke-linecap="round" /><path d="M413.4 122.6v9.4M413.4 126.4h3M413.4 130.6h3" fill="none" stroke="#bcbcc0" stroke-width="0.9" stroke-linejoin="round" stroke-linecap="round" /><rect x="412" y="119.6" width="3" height="3" fill="none" stroke="#bcbcc0" stroke-width="0.8"/><circle cx="421" cy="127.6" r="3.2" fill="none" stroke="#bcbcc0" stroke-width="0.9"/><polyline points="431.4,123.2 437.0,120.4 442.6,123.2 437.0,126.0 431.4,123.2 431.4,128.8 437.0,131.6 442.6,128.8 442.6,123.2" fill="none" stroke="#f08a24" stroke-width="1.0" stroke-linejoin="round" stroke-linecap="round" /><polyline points="437.0,126.0 437.0,131.6" fill="none" stroke="#f08a24" stroke-width="1.0" stroke-linejoin="round" stroke-linecap="round" /><circle cx="441.4" cy="130" r="3" fill="#8a8a8e" stroke="#2c2c30" stroke-width="0.8"/><path d="M436.79999999999995 130h9.2M441.4 125.4v9.2" fill="none" stroke="#2c2c30" stroke-width="0.8" stroke-linejoin="round" stroke-linecap="round" /><rect x="452.4" y="120.4" width="8.8" height="8.8" fill="none" stroke="#f08a24" stroke-width="1.1"/><circle cx="461.2" cy="130.4" r="3" fill="#8a8a8e" stroke="#2c2c30" stroke-width="0.8"/><path d="M456.59999999999997 130.4h9.2M461.2 125.80000000000001v9.2" fill="none" stroke="#2c2c30" stroke-width="0.8" stroke-linejoin="round" stroke-linecap="round" /><polygon points="483.7,123.3 490.3,126.8 490.3,133.4 483.7,129.9" fill="#e4e4e8" stroke="#a0a0a4" stroke-width="0.7" stroke-linejoin="round" /><polygon points="496.9,123.3 490.3,126.8 490.3,133.4 496.9,129.9" fill="#c8c8cc" stroke="#a0a0a4" stroke-width="0.7" stroke-linejoin="round" /><polygon points="483.7,123.3 490.3,119.8 496.9,123.3 490.3,126.8" fill="#f0f0f2" stroke="#a0a0a4" stroke-width="0.7" stroke-linejoin="round" /><path d="M486 125l9 4" fill="none" stroke="#f08a24" stroke-width="1.2" stroke-linejoin="round" stroke-linecap="round" /><polygon points="504.0,123.3 510.6,126.8 510.6,133.4 504.0,129.9" fill="#e4e4e8" stroke="#a0a0a4" stroke-width="0.7" stroke-linejoin="round" /><polygon points="517.2,123.3 510.6,126.8 510.6,133.4 517.2,129.9" fill="#c8c8cc" stroke="#a0a0a4" stroke-width="0.7" stroke-linejoin="round" /><polygon points="504.0,123.3 510.6,119.8 517.2,123.3 510.6,126.8" fill="#f0f0f2" stroke="#a0a0a4" stroke-width="0.7" stroke-linejoin="round" /><polyline points="510.6,119.8 510.6,126.8 517.2,130.0" fill="none" stroke="#f08a24" stroke-width="0.9" stroke-linejoin="round" stroke-linecap="round" /><polyline points="510.6,126.8 504.0,130.0" fill="none" stroke="#f08a24" stroke-width="0.9" stroke-linejoin="round" stroke-linecap="round" /><polygon points="524.4,122.6 530.6,120.4 536.2,122.6 536.2,130.4 530.0,133.0 524.4,130.4" fill="#9a9af0" stroke="#c8203a" stroke-width="1.2" stroke-linejoin="round" /><polygon points="526.4,124.2 534.4,124.2 534.4,131.0 526.4,131.0" fill="#b4b8f8" stroke="#c8203a" stroke-width="0.9" stroke-linejoin="round" /><polygon points="534.4,124.2 536.2,122.6 536.2,130.4 534.4,131.0" fill="#5a40c0" stroke="none" stroke-width="0" stroke-linejoin="round" /><g transform="translate(35.4,142.2) scale(0.68)"><path d="M0.4 11.8C1.4 7.4 4.2 3.4 8.4 0.4C9.6 -0.2 10.6 0.6 10.6 1.8V8.6L18.6 13V15.4L11.6 18.4C10.6 18.8 9.6 18.7 8.6 18.2L0.8 13.8C0.3 13.4 0.2 12.6 0.4 11.8z" fill="#a8a8ac" stroke="#6a6a6e" stroke-width="0.8" stroke-linejoin="round" stroke-linecap="round" /><path d="M8.4 0.4C9.6 -0.2 10.6 0.6 10.6 1.8V8.6L7 10.6C7.2 6.6 7.6 3.4 8.4 0.4z" fill="#86868a" stroke="#6a6a6e" stroke-width="0.5" stroke-linejoin="round" stroke-linecap="round" /><path d="M7 10.6L10.6 8.6L18.6 13L11.4 16.2L2.2 11.4z" fill="#cacace" stroke="#6a6a6e" stroke-width="0.5" stroke-linejoin="round" stroke-linecap="round" /><ellipse cx="10.6" cy="12.6" rx="3.2" ry="1.7" fill="#86868a" stroke="#6a6a6e" stroke-width="0.5"/></g><g transform="translate(7.3,242) scale(1.0)"><path d="M0.4 11.8C1.4 7.4 4.2 3.4 8.4 0.4C9.6 -0.2 10.6 0.6 10.6 1.8V8.6L18.6 13V15.4L11.6 18.4C10.6 18.8 9.6 18.7 8.6 18.2L0.8 13.8C0.3 13.4 0.2 12.6 0.4 11.8z" fill="#a8a8ac" stroke="#6a6a6e" stroke-width="0.8" stroke-linejoin="round" stroke-linecap="round" /><path d="M8.4 0.4C9.6 -0.2 10.6 0.6 10.6 1.8V8.6L7 10.6C7.2 6.6 7.6 3.4 8.4 0.4z" fill="#86868a" stroke="#6a6a6e" stroke-width="0.5" stroke-linejoin="round" stroke-linecap="round" /><path d="M7 10.6L10.6 8.6L18.6 13L11.4 16.2L2.2 11.4z" fill="#cacace" stroke="#6a6a6e" stroke-width="0.5" stroke-linejoin="round" stroke-linecap="round" /><ellipse cx="10.6" cy="12.6" rx="3.2" ry="1.7" fill="#86868a" stroke="#6a6a6e" stroke-width="0.5"/></g><g transform="translate(596.4,142) scale(0.66)"><path d="M0.4 11.8C1.4 7.4 4.2 3.4 8.4 0.4C9.6 -0.2 10.6 0.6 10.6 1.8V8.6L18.6 13V15.4L11.6 18.4C10.6 18.8 9.6 18.7 8.6 18.2L0.8 13.8C0.3 13.4 0.2 12.6 0.4 11.8z" fill="#a8a8ac" stroke="#6a6a6e" stroke-width="0.8" stroke-linejoin="round" stroke-linecap="round" /><path d="M8.4 0.4C9.6 -0.2 10.6 0.6 10.6 1.8V8.6L7 10.6C7.2 6.6 7.6 3.4 8.4 0.4z" fill="#86868a" stroke="#6a6a6e" stroke-width="0.5" stroke-linejoin="round" stroke-linecap="round" /><path d="M7 10.6L10.6 8.6L18.6 13L11.4 16.2L2.2 11.4z" fill="#cacace" stroke="#6a6a6e" stroke-width="0.5" stroke-linejoin="round" stroke-linecap="round" /><ellipse cx="10.6" cy="12.6" rx="3.2" ry="1.7" fill="#86868a" stroke="#6a6a6e" stroke-width="0.5"/></g><g transform="translate(777.4,142) scale(0.66)"><path d="M0.4 11.8C1.4 7.4 4.2 3.4 8.4 0.4C9.6 -0.2 10.6 0.6 10.6 1.8V8.6L18.6 13V15.4L11.6 18.4C10.6 18.8 9.6 18.7 8.6 18.2L0.8 13.8C0.3 13.4 0.2 12.6 0.4 11.8z" fill="#a8a8ac" stroke="#6a6a6e" stroke-width="0.8" stroke-linejoin="round" stroke-linecap="round" /><path d="M8.4 0.4C9.6 -0.2 10.6 0.6 10.6 1.8V8.6L7 10.6C7.2 6.6 7.6 3.4 8.4 0.4z" fill="#86868a" stroke="#6a6a6e" stroke-width="0.5" stroke-linejoin="round" stroke-linecap="round" /><path d="M7 10.6L10.6 8.6L18.6 13L11.4 16.2L2.2 11.4z" fill="#cacace" stroke="#6a6a6e" stroke-width="0.5" stroke-linejoin="round" stroke-linecap="round" /><ellipse cx="10.6" cy="12.6" rx="3.2" ry="1.7" fill="#86868a" stroke="#6a6a6e" stroke-width="0.5"/></g><g transform="translate(1003.6,142) scale(0.66)"><path d="M0.4 11.8C1.4 7.4 4.2 3.4 8.4 0.4C9.6 -0.2 10.6 0.6 10.6 1.8V8.6L18.6 13V15.4L11.6 18.4C10.6 18.8 9.6 18.7 8.6 18.2L0.8 13.8C0.3 13.4 0.2 12.6 0.4 11.8z" fill="#d8d8dc" stroke="#9a9a9e" stroke-width="0.8" stroke-linejoin="round" stroke-linecap="round" /><path d="M8.4 0.4C9.6 -0.2 10.6 0.6 10.6 1.8V8.6L7 10.6C7.2 6.6 7.6 3.4 8.4 0.4z" fill="#b8b8bc" stroke="#9a9a9e" stroke-width="0.5" stroke-linejoin="round" stroke-linecap="round" /><path d="M7 10.6L10.6 8.6L18.6 13L11.4 16.2L2.2 11.4z" fill="#f0f0f2" stroke="#9a9a9e" stroke-width="0.5" stroke-linejoin="round" stroke-linecap="round" /><ellipse cx="10.6" cy="12.6" rx="3.2" ry="1.7" fill="#b8b8bc" stroke="#9a9a9e" stroke-width="0.5"/></g><path d="M486.6 147v-5l3.9 1.8l3.9-2.2l3.5 1.2v9.800l-3.5-1l-1.2 0.600" fill="none" stroke="#4a4a4e" stroke-width="1.0" stroke-linejoin="round" stroke-linecap="round" /><path d="M494.4 141.6v10" fill="none" stroke="#4a4a4e" stroke-width="1.0" stroke-linejoin="round" stroke-linecap="round" /><path d="M490.5 143.8v2" fill="none" stroke="#4a4a4e" stroke-width="0.8" stroke-linejoin="round" stroke-linecap="round" /><circle cx="489.8" cy="149.8" r="3.9" fill="#fff" stroke="#4a4a4e" stroke-width="1"/><path d="M487.6 152l1.200-3.200l3.200-1.200l-1.200 3.200z" fill="#6a6a6e" stroke="#4a4a4e" stroke-width="0.5" stroke-linejoin="round" stroke-linecap="round" /><path d="M752.0 145.1H748.9a1.3 1.3 0 0 0 -1.3 1.3V151.1a1.3 1.3 0 0 0 1.3 1.3H752.6a1.3 1.3 0 0 0 1.3 -1.3V149.29999999999998" fill="none" stroke="#3a3a3e" stroke-width="1.1" stroke-linejoin="round" stroke-linecap="round" /><path d="M751.2 148.9L754.8000000000001 145.5" fill="none" stroke="#3a3a3e" stroke-width="1.3" stroke-linejoin="round" stroke-linecap="round" /><path d="M749.6 145.1V144.1h2.4" fill="none" stroke="#3a3a3e" stroke-width="0.9" stroke-linejoin="round" stroke-linecap="round" /><path d="M879.6999999999999 145.1H876.5999999999999a1.3 1.3 0 0 0 -1.3 1.3V151.1a1.3 1.3 0 0 0 1.3 1.3H880.3a1.3 1.3 0 0 0 1.3 -1.3V149.29999999999998" fill="none" stroke="#3a3a3e" stroke-width="1.1" stroke-linejoin="round" stroke-linecap="round" /><path d="M878.9 148.9L882.5 145.5" fill="none" stroke="#3a3a3e" stroke-width="1.3" stroke-linejoin="round" stroke-linecap="round" /><path d="M877.3 145.1V144.1h2.4" fill="none" stroke="#3a3a3e" stroke-width="0.9" stroke-linejoin="round" stroke-linecap="round" /><path d="M1105.6000000000001 145.1H1102.5a1.3 1.3 0 0 0 -1.3 1.3V151.1a1.3 1.3 0 0 0 1.3 1.3H1106.2a1.3 1.3 0 0 0 1.3 -1.3V149.29999999999998" fill="none" stroke="#ffffff" stroke-width="1.1" stroke-linejoin="round" stroke-linecap="round" /><path d="M1104.8 148.9L1108.4 145.5" fill="none" stroke="#ffffff" stroke-width="1.3" stroke-linejoin="round" stroke-linecap="round" /><path d="M1103.2 145.1V144.1h2.4" fill="none" stroke="#ffffff" stroke-width="0.9" stroke-linejoin="round" stroke-linecap="round" /><path d="M888.5 145l6.100 6.100M894.6 145l-6.100 6.100" fill="none" stroke="#1a1a1a" stroke-width="1.9" stroke-linejoin="round" stroke-linecap="round" stroke-linecap="butt"/><path d="M1114.5 145l6.100 6.100M1120.6 145l-6.100 6.100" fill="none" stroke="#ffffff" stroke-width="1.9" stroke-linejoin="round" stroke-linecap="round" stroke-linecap="butt"/><rect x="461.8" y="144.4" width="8.6" height="7.8" fill="#fff" stroke="#1a1a1a" stroke-width="1"/><rect x="461.8" y="144.2" width="8.6" height="1.7" fill="#1a1a1a"/><path d="M81.8 169.8h7.2l-3.6-4.6z" fill="#1a1a1a"/><path d="M44.6 776.4v6.8l4.2-3.4z" fill="#1a5a80"/><path d="M44.6 794.9v6.8l4.2-3.4z" fill="#1a5a80"/><path d="M44.6 813.3000000000001v6.8l4.2-3.4z" fill="#1a5a80"/><path d="M44.6 831.7v6.8l4.2-3.4z" fill="#1a5a80"/><path d="M1423.2 861.4c1.800-1.200 1.600-4.400 2-6.400a3.400 3.600 0 0 1 6.800 0c0.400 2 0.200 5.200 2 6.400zM1427 862.2a1.700 1.500 0 0 0 3.400 0M1428.700 851.300v1.200M1425.800 859.200h5.800" fill="none" stroke="#3a3a3e" stroke-width="1.0" stroke-linejoin="round" stroke-linecap="round" /><path d="M45.3 183v48" fill="none" stroke="#9a9a9e" stroke-width="0.7" stroke-linejoin="round" stroke-linecap="round" stroke-dasharray="1 1"/><path d="M45.3 183h7" fill="none" stroke="#9a9a9e" stroke-width="0.7" stroke-linejoin="round" stroke-linecap="round" stroke-dasharray="1 1"/><path d="M60.6 238v121" fill="none" stroke="#9a9a9e" stroke-width="0.7" stroke-linejoin="round" stroke-linecap="round" stroke-dasharray="1 1"/><path d="M60.6 247.16h7" fill="none" stroke="#9a9a9e" stroke-width="0.7" stroke-linejoin="round" stroke-linecap="round" stroke-dasharray="1 1"/><path d="M60.6 263.2h7" fill="none" stroke="#9a9a9e" stroke-width="0.7" stroke-linejoin="round" stroke-linecap="round" stroke-dasharray="1 1"/><path d="M60.6 279.24h7" fill="none" stroke="#9a9a9e" stroke-width="0.7" stroke-linejoin="round" stroke-linecap="round" stroke-dasharray="1 1"/><path d="M60.6 295.28h7" fill="none" stroke="#9a9a9e" stroke-width="0.7" stroke-linejoin="round" stroke-linecap="round" stroke-dasharray="1 1"/><path d="M60.6 311.32h7" fill="none" stroke="#9a9a9e" stroke-width="0.7" stroke-linejoin="round" stroke-linecap="round" stroke-dasharray="1 1"/><path d="M60.6 327.36h7" fill="none" stroke="#9a9a9e" stroke-width="0.7" stroke-linejoin="round" stroke-linecap="round" stroke-dasharray="1 1"/><path d="M60.6 343.4h7" fill="none" stroke="#9a9a9e" stroke-width="0.7" stroke-linejoin="round" stroke-linecap="round" stroke-dasharray="1 1"/><path d="M48.6 199h4M48.6 215h4M48.6 231h4" fill="none" stroke="#9a9a9e" stroke-width="0.7" stroke-linejoin="round" stroke-linecap="round" stroke-dasharray="1 1"/><rect x="41.9" y="195.6" width="6.8" height="6.8" fill="#fff" stroke="#ececf0" stroke-width="0.6"/><path d="M43.4 199h3.8" fill="none" stroke="#2a2a2a" stroke-width="0.9" stroke-linejoin="round" stroke-linecap="round" /><path d="M45.3 197.1v3.8" fill="none" stroke="#2a2a2a" stroke-width="0.9" stroke-linejoin="round" stroke-linecap="round" /><rect x="41.9" y="211.6" width="6.8" height="6.8" fill="#fff" stroke="#ececf0" stroke-width="0.6"/><path d="M43.4 215h3.8" fill="none" stroke="#2a2a2a" stroke-width="0.9" stroke-linejoin="round" stroke-linecap="round" /><path d="M45.3 213.1v3.8" fill="none" stroke="#2a2a2a" stroke-width="0.9" stroke-linejoin="round" stroke-linecap="round" /><rect x="41.9" y="227.79999999999998" width="6.8" height="6.8" fill="#fff" stroke="#ececf0" stroke-width="0.6"/><path d="M43.4 231.2h3.8" fill="none" stroke="#2a2a2a" stroke-width="0.9" stroke-linejoin="round" stroke-linecap="round" /><rect x="57.0" y="356.04" width="6.8" height="6.8" fill="#fff" stroke="#ececf0" stroke-width="0.6"/><path d="M58.5 359.44h3.8" fill="none" stroke="#2a2a2a" stroke-width="0.9" stroke-linejoin="round" stroke-linecap="round" /><path d="M60.4 357.54v3.8" fill="none" stroke="#2a2a2a" stroke-width="0.9" stroke-linejoin="round" stroke-linecap="round" /><circle cx="58.7" cy="182.9" r="5.9" fill="#fff" stroke="#3a3a3e" stroke-width="0.9"/><path d="M58.7 179.24200000000002V182.9H55.455000000000005" fill="none" stroke="#3a3a3e" stroke-width="0.9" stroke-linejoin="round" stroke-linecap="round" /><path d="M58.7 177.0v1.062M58.7 188.8v-1.062M52.800000000000004 182.9h1.062M64.60000000000001 182.9h-1.062" fill="none" stroke="#3a3a3e" stroke-width="0.7200000000000001" stroke-linejoin="round" stroke-linecap="round" /><rect x="52.6" y="192.6" width="12.6" height="12.6" fill="#fff" stroke="#3a3a3e" stroke-width="0.9"/><path d="M52.6 195.2h12.6" fill="none" stroke="#3a3a3e" stroke-width="0.8" stroke-linejoin="round" stroke-linecap="round" /><g transform="translate(55.4,196.6) scale(0.4)"><path d="M0.4 11.8C1.4 7.4 4.2 3.4 8.4 0.4C9.6 -0.2 10.6 0.6 10.6 1.8V8.6L18.6 13V15.4L11.6 18.4C10.6 18.8 9.6 18.7 8.6 18.2L0.8 13.8C0.3 13.4 0.2 12.6 0.4 11.8z" fill="#a8a8ac" stroke="#6a6a6e" stroke-width="0.8" stroke-linejoin="round" stroke-linecap="round" /><path d="M8.4 0.4C9.6 -0.2 10.6 0.6 10.6 1.8V8.6L7 10.6C7.2 6.6 7.6 3.4 8.4 0.4z" fill="#86868a" stroke="#6a6a6e" stroke-width="0.5" stroke-linejoin="round" stroke-linecap="round" /><path d="M7 10.6L10.6 8.6L18.6 13L11.4 16.2L2.2 11.4z" fill="#cacace" stroke="#6a6a6e" stroke-width="0.5" stroke-linejoin="round" stroke-linecap="round" /><ellipse cx="10.6" cy="12.6" rx="3.2" ry="1.7" fill="#86868a" stroke="#6a6a6e" stroke-width="0.5"/></g><path d="M54.14 215.23l3.57 3.9899999999999998l6.93 -9.450000000000001" fill="none" stroke="#38d23a" stroke-width="1.785" stroke-linejoin="round" stroke-linecap="round" stroke-linecap="butt" stroke-linejoin="miter"/><polygon points="66.6,212.0 75.0,209.4 76.6,218.4 68.0,220.8" fill="#fff" stroke="#f08a28" stroke-width="0.9" stroke-linejoin="round" /><path d="M69 213.4h3.6l1.6-1.4v6l-1.6-1.4H69z" fill="#6a6a6e" stroke="none" stroke-width="0" stroke-linejoin="round" stroke-linecap="round" /><circle cx="74.4" cy="215.2" r="1.3" fill="#f08a28"/><circle cx="59.1" cy="231.2" r="5.5" fill="url(#gball)" stroke="#28a828" stroke-width="0.5"/><rect x="66.8" y="225.4" width="11.2" height="11.8" fill="#f4f4f6" stroke="#b0b0b4" stroke-width="0.8"/><rect x="68.4" y="227.4" width="5" height="5" fill="#fff" stroke="#4a4a4e" stroke-width="0.8"/><rect x="71.4" y="229.6" width="5.2" height="5.2" fill="#f58a1c" stroke="#d86a0c" stroke-width="0.5"/><path d="M68.1 247.26C70.4 242.85999999999999 77.6 242.85999999999999 79.9 247.26C77.6 251.66 70.4 251.66 68.1 247.26z" fill="#fff" stroke="#3a3a3e" stroke-width="0.9" stroke-linejoin="round" stroke-linecap="round" /><circle cx="74" cy="247.26" r="2.7" fill="#3a3a3e"/><path d="M68.1 263.3C70.4 258.90000000000003 77.6 258.90000000000003 79.9 263.3C77.6 267.7 70.4 267.7 68.1 263.3z" fill="#fff" stroke="#3a3a3e" stroke-width="0.9" stroke-linejoin="round" stroke-linecap="round" /><circle cx="74" cy="263.3" r="2.7" fill="#3a3a3e"/><path d="M68.1 279.34000000000003C70.4 274.94000000000005 77.6 274.94000000000005 79.9 279.34000000000003C77.6 283.74 70.4 283.74 68.1 279.34000000000003z" fill="#fff" stroke="#3a3a3e" stroke-width="0.9" stroke-linejoin="round" stroke-linecap="round" /><circle cx="74" cy="279.34000000000003" r="2.7" fill="#3a3a3e"/><path d="M68.1 295.38C70.4 290.98 77.6 290.98 79.9 295.38C77.6 299.78 70.4 299.78 68.1 295.38z" fill="#fff" stroke="#3a3a3e" stroke-width="0.9" stroke-linejoin="round" stroke-linecap="round" /><circle cx="74" cy="295.38" r="2.7" fill="#3a3a3e"/><path d="M68.1 311.42C70.4 307.02000000000004 77.6 307.02000000000004 79.9 311.42C77.6 315.82 70.4 315.82 68.1 311.42z" fill="#fff" stroke="#3a3a3e" stroke-width="0.9" stroke-linejoin="round" stroke-linecap="round" /><circle cx="74" cy="311.42" r="2.7" fill="#3a3a3e"/><path d="M68.1 327.46000000000004C70.4 323.06000000000006 77.6 323.06000000000006 79.9 327.46000000000004C77.6 331.86 70.4 331.86 68.1 327.46000000000004z" fill="#fff" stroke="#3a3a3e" stroke-width="0.9" stroke-linejoin="round" stroke-linecap="round" /><circle cx="74" cy="327.46000000000004" r="2.7" fill="#3a3a3e"/><path d="M68.1 343.5C70.4 339.1 77.6 339.1 79.9 343.5C77.6 347.9 70.4 347.9 68.1 343.5z" fill="#fff" stroke="#3a3a3e" stroke-width="0.9" stroke-linejoin="round" stroke-linecap="round" /><circle cx="74" cy="343.5" r="2.7" fill="#3a3a3e"/><path d="M68.1 359.54C70.4 355.14000000000004 77.6 355.14000000000004 79.9 359.54C77.6 363.94 70.4 363.94 68.1 359.54z" fill="#fff" stroke="#3a3a3e" stroke-width="0.9" stroke-linejoin="round" stroke-linecap="round" /><circle cx="74" cy="359.54" r="2.7" fill="#3a3a3e"/><path d="M87.2 241.35999999999999v6M87.2 247.35999999999999l-5.4 4.4M87.2 247.35999999999999l5.4 4.4" fill="none" stroke="#e0607c" stroke-width="0.9" stroke-linejoin="round" stroke-linecap="round" /><circle cx="87.2" cy="247.96" r="2.9" fill="none" stroke="#e0607c" stroke-width="0.8"/><path d="M87.2 240.76l-1.2 1.8h2.4zM81.2 252.16l2.2-0.2l-1.4-1.6zM93.2 252.16l-2.2-0.2l1.4-1.6z" fill="#e0607c" stroke="#e0607c" stroke-width="0.4" stroke-linejoin="round" stroke-linecap="round" /><g transform="translate(81.4,256.4) scale(0.48)"><path d="M6.4 2.8V22.3H22.8" fill="none" stroke="#38a6c6" stroke-width="0.9" stroke-linejoin="round" stroke-linecap="round" /><path d="M2.1 13.8C7 7 15 2 25.2 0.9" fill="none" stroke="#38a6c6" stroke-width="0.9" stroke-linejoin="round" stroke-linecap="round" /><circle cx="15.8" cy="12.6" r="5.3" fill="none" stroke="#38a6c6" stroke-width="0.9"/><g transform="translate(11.5,26.3) rotate(-44.5)"><path d="M0 0L5.2 -2.6V2.6z" fill="#efe2c8" stroke="#5a4a38" stroke-width="0.5"/><path d="M0 0L2 -1V1z" fill="#3a3a3a"/><rect x="5.2" y="-2.6" width="12.8" height="5.2" fill="#e9c63c" stroke="#8a6a18" stroke-width="0.5"/><rect x="5.2" y="-0.9" width="12.8" height="1.8" fill="#d8ac28"/><rect x="18" y="-2.6" width="3.4" height="5.2" rx="0.8" fill="#d9525c" stroke="#8c2c34" stroke-width="0.5"/></g></g><g transform="translate(81.4,288.47999999999996) scale(0.48)"><path d="M6.4 2.8V22.3H22.8" fill="none" stroke="#38a6c6" stroke-width="0.9" stroke-linejoin="round" stroke-linecap="round" /><path d="M2.1 13.8C7 7 15 2 25.2 0.9" fill="none" stroke="#38a6c6" stroke-width="0.9" stroke-linejoin="round" stroke-linecap="round" /><circle cx="15.8" cy="12.6" r="5.3" fill="none" stroke="#38a6c6" stroke-width="0.9"/><g transform="translate(11.5,26.3) rotate(-44.5)"><path d="M0 0L5.2 -2.6V2.6z" fill="#efe2c8" stroke="#5a4a38" stroke-width="0.5"/><path d="M0 0L2 -1V1z" fill="#3a3a3a"/><rect x="5.2" y="-2.6" width="12.8" height="5.2" fill="#e9c63c" stroke="#8a6a18" stroke-width="0.5"/><rect x="5.2" y="-0.9" width="12.8" height="1.8" fill="#d8ac28"/><rect x="18" y="-2.6" width="3.4" height="5.2" rx="0.8" fill="#d9525c" stroke="#8c2c34" stroke-width="0.5"/></g></g><g transform="translate(81.2,273.44) scale(0.52)"><polygon points="0.0,8.0 5.4,11.8 5.4,21.8 0.0,18.0" fill="url(#gl)" stroke="#5a5a5e" stroke-width="0.95" stroke-linejoin="round" /><polygon points="5.4,11.8 12.2,7.4 12.2,17.8 5.4,21.8" fill="url(#gd)" stroke="#5a5a5e" stroke-width="0.95" stroke-linejoin="round" /><polygon points="12.2,7.4 19.1,11.8 19.1,21.8 12.2,17.8" fill="url(#gl)" stroke="#5a5a5e" stroke-width="0.95" stroke-linejoin="round" /><polygon points="19.1,11.8 24.6,8.0 24.6,18.0 19.1,21.8" fill="url(#gd)" stroke="#5a5a5e" stroke-width="0.95" stroke-linejoin="round" /><polygon points="0.0,8.0 12.2,0.2 24.6,8.0 19.1,11.8 12.2,7.4 5.4,11.8" fill="#e6e6ea" stroke="#46bfe0" stroke-width="1.0" stroke-linejoin="round" /></g><g transform="translate(81.2,305.52) scale(0.52)"><polygon points="0.0,8.0 5.4,11.8 5.4,21.8 0.0,18.0" fill="url(#gl)" stroke="#5a5a5e" stroke-width="0.95" stroke-linejoin="round" /><polygon points="5.4,11.8 12.2,7.4 12.2,17.8 5.4,21.8" fill="url(#gd)" stroke="#5a5a5e" stroke-width="0.95" stroke-linejoin="round" /><polygon points="12.2,7.4 19.1,11.8 19.1,21.8 12.2,17.8" fill="url(#gl)" stroke="#5a5a5e" stroke-width="0.95" stroke-linejoin="round" /><polygon points="19.1,11.8 24.6,8.0 24.6,18.0 19.1,21.8" fill="url(#gd)" stroke="#5a5a5e" stroke-width="0.95" stroke-linejoin="round" /><polygon points="0.0,8.0 12.2,0.2 24.6,8.0 19.1,11.8 12.2,7.4 5.4,11.8" fill="#e6e6ea" stroke="#46bfe0" stroke-width="1.0" stroke-linejoin="round" /></g><polygon points="81.4,325.8 87.0,321.8 91.0,324.0 85.4,328.0" fill="url(#gt)" stroke="#5a5a5e" stroke-width="0.6" stroke-linejoin="round" /><polygon points="81.4,325.8 85.4,328.0 87.4,333.6 81.4,330.2" fill="url(#gl)" stroke="#5a5a5e" stroke-width="0.6" stroke-linejoin="round" /><polygon points="87.4,333.6 93.0,330.0 93.0,328.4 87.4,331.8" fill="url(#gd)" stroke="#5a5a5e" stroke-width="0.6" stroke-linejoin="round" /><polygon points="85.4,328.0 91.0,324.0 93.0,328.4 87.4,331.8" fill="url(#og)" stroke="#d8721a" stroke-width="0.5" stroke-linejoin="round" /><path d="M84.6 337.79999999999995h5.2v9l-2.6 2.2l-2.6-2.2z" fill="#fff" stroke="#3a3a3e" stroke-width="0.9" stroke-linejoin="round" stroke-linecap="round" /><path d="M81.4 359.24l4.4-2.4l4.4 2.4l-4.4 2.600z" fill="#dcdce0" stroke="#6a6a6e" stroke-width="0.6"/><path d="M81.4 359.24v1.8l4.4 2.600v-1.8z" fill="#c4c4c8" stroke="#6a6a6e" stroke-width="0.5"/><path d="M84.2 354.84v3.8a2.7 1.1 0 0 0 5.4 0v-3.8z" fill="url(#ogh)" stroke="#e07410" stroke-width="0.5"/><ellipse cx="86.9" cy="354.84" rx="2.7" ry="1.1" fill="#ffb248" stroke="#e07410" stroke-width="0.5"/><circle cx="87.2" cy="359.54" r="2" fill="#fff" stroke="#2c2c30" stroke-width="1.1"/><circle cx="91.7" cy="359.54" r="2" fill="#fff" stroke="#2c2c30" stroke-width="1.1"/><circle cx="87.2" cy="363.64" r="2" fill="#fff" stroke="#2c2c30" stroke-width="1.1"/><circle cx="91.7" cy="363.64" r="2" fill="#fff" stroke="#2c2c30" stroke-width="1.1"/><rect x="204.8" y="353.8" width="3.6" height="3" fill="#f0a050" stroke="#7a6a5e" stroke-width="0.5"/><rect x="204.8" y="358" width="3.6" height="3" fill="#c8c8cc" stroke="#6a6a6e" stroke-width="0.5"/><rect x="204.8" y="362" width="3.6" height="2.6" fill="#f0a050" stroke="#7a6a5e" stroke-width="0.5"/><path d="M220.784 231.568l3.672 4.104l7.128 -9.72" fill="none" stroke="#38d23a" stroke-width="1.836" stroke-linejoin="round" stroke-linecap="round" stroke-linecap="butt" stroke-linejoin="miter"/><path d="M220.784 247.608l3.672 4.104l7.128 -9.72" fill="none" stroke="#38d23a" stroke-width="1.836" stroke-linejoin="round" stroke-linecap="round" stroke-linecap="butt" stroke-linejoin="miter"/><path d="M220.784 263.648l3.672 4.104l7.128 -9.72" fill="none" stroke="#38d23a" stroke-width="1.836" stroke-linejoin="round" stroke-linecap="round" stroke-linecap="butt" stroke-linejoin="miter"/><path d="M220.784 279.68800000000005l3.672 4.104l7.128 -9.72" fill="none" stroke="#38d23a" stroke-width="1.836" stroke-linejoin="round" stroke-linecap="round" stroke-linecap="butt" stroke-linejoin="miter"/><path d="M220.784 295.728l3.672 4.104l7.128 -9.72" fill="none" stroke="#38d23a" stroke-width="1.836" stroke-linejoin="round" stroke-linecap="round" stroke-linecap="butt" stroke-linejoin="miter"/><path d="M220.784 311.76800000000003l3.672 4.104l7.128 -9.72" fill="none" stroke="#38d23a" stroke-width="1.836" stroke-linejoin="round" stroke-linecap="round" stroke-linecap="butt" stroke-linejoin="miter"/><path d="M220.784 327.80800000000005l3.672 4.104l7.128 -9.72" fill="none" stroke="#38d23a" stroke-width="1.836" stroke-linejoin="round" stroke-linecap="round" stroke-linecap="butt" stroke-linejoin="miter"/><path d="M220.784 343.848l3.672 4.104l7.128 -9.72" fill="none" stroke="#38d23a" stroke-width="1.836" stroke-linejoin="round" stroke-linecap="round" stroke-linecap="butt" stroke-linejoin="miter"/><path d="M220.784 359.88800000000003l3.672 4.104l7.128 -9.72" fill="none" stroke="#38d23a" stroke-width="1.836" stroke-linejoin="round" stroke-linecap="round" stroke-linecap="butt" stroke-linejoin="miter"/><polygon points="14.1,143.0 16.3,143.0 16.5,144.6 17.8,145.1 19.0,144.1 20.6,145.7 19.6,146.9 20.1,148.2 21.7,148.4 21.7,150.6 20.1,150.8 19.6,152.1 20.6,153.3 19.0,154.9 17.8,153.9 16.5,154.4 16.3,156.0 14.1,156.0 13.9,154.4 12.6,153.9 11.4,154.9 9.8,153.3 10.8,152.1 10.3,150.8 8.7,150.6 8.7,148.4 10.3,148.2 10.8,146.9 9.8,145.7 11.4,144.1 12.6,145.1 13.9,144.6" fill="none" stroke="#4a4a4e" stroke-width="0.9" stroke-linejoin="round"/><circle cx="15.2" cy="149.5" r="2.3" fill="none" stroke="#4a4a4e" stroke-width="0.9"/><polygon points="13.7,173.4 18.6,176.0 18.6,180.6 13.7,178.0" fill="url(#gl)" stroke="#5a5a5e" stroke-width="0.7" stroke-linejoin="round" /><polygon points="23.5,173.4 18.6,176.0 18.6,180.6 23.5,178.0" fill="url(#gd)" stroke="#5a5a5e" stroke-width="0.7" stroke-linejoin="round" /><polygon points="13.7,173.4 18.6,170.8 23.5,173.4 18.6,176.0" fill="url(#gt)" stroke="#5a5a5e" stroke-width="0.7" stroke-linejoin="round" /><polygon points="8.9,176.2 13.8,178.8 13.8,183.4 8.9,180.8" fill="url(#gl)" stroke="#5a5a5e" stroke-width="0.7" stroke-linejoin="round" /><polygon points="18.7,176.2 13.8,178.8 13.8,183.4 18.7,180.8" fill="url(#gd)" stroke="#5a5a5e" stroke-width="0.7" stroke-linejoin="round" /><polygon points="8.9,176.2 13.8,173.6 18.7,176.2 13.8,178.8" fill="url(#gt)" stroke="#5a5a5e" stroke-width="0.7" stroke-linejoin="round" /><polygon points="8.9,181.2 13.8,183.8 13.8,188.6 8.9,186.0" fill="url(#gl)" stroke="#5a5a5e" stroke-width="0.7" stroke-linejoin="round" /><polygon points="18.7,181.2 13.8,183.8 13.8,188.6 18.7,186.0" fill="url(#gd)" stroke="#5a5a5e" stroke-width="0.7" stroke-linejoin="round" /><polygon points="8.9,181.2 13.8,178.6 18.7,181.2 13.8,183.8" fill="url(#gt)" stroke="#5a5a5e" stroke-width="0.7" stroke-linejoin="round" /><polygon points="11.6,209.0 16.4,211.6 16.4,216.0 11.6,213.4" fill="url(#gl)" stroke="#8a8a8e" stroke-width="0.6" stroke-linejoin="round" /><polygon points="21.2,209.0 16.4,211.6 16.4,216.0 21.2,213.4" fill="url(#gd)" stroke="#8a8a8e" stroke-width="0.6" stroke-linejoin="round" /><polygon points="11.6,209.0 16.4,206.4 21.2,209.0 16.4,211.6" fill="url(#gt)" stroke="#8a8a8e" stroke-width="0.6" stroke-linejoin="round" /><polygon points="7.0,211.4 11.8,214.0 11.8,218.6 7.0,216.0" fill="#f4821a" stroke="#c86414" stroke-width="0.5" stroke-linejoin="round" /><polygon points="16.6,211.4 11.8,214.0 11.8,218.6 16.6,216.0" fill="#e86c0e" stroke="#c86414" stroke-width="0.5" stroke-linejoin="round" /><polygon points="7.0,211.4 11.8,208.8 16.6,211.4 11.8,214.0" fill="url(#og)" stroke="#c86414" stroke-width="0.5" stroke-linejoin="round" /><polygon points="7.0,216.8 11.8,219.4 11.8,223.8 7.0,221.2" fill="url(#gl)" stroke="#8a8a8e" stroke-width="0.6" stroke-linejoin="round" /><polygon points="16.6,216.8 11.8,219.4 11.8,223.8 16.6,221.2" fill="url(#gd)" stroke="#8a8a8e" stroke-width="0.6" stroke-linejoin="round" /><polygon points="7.0,216.8 11.8,214.2 16.6,216.8 11.8,219.4" fill="url(#gt)" stroke="#8a8a8e" stroke-width="0.6" stroke-linejoin="round" /><path d="M15.8 214.4v10l10.4-10v10z" fill="#fff" stroke="#2c2c30" stroke-width="0.9" stroke-linejoin="round" stroke-linecap="round" /><path d="M8.2 293c2.6-1.6 2.4-5.6 3-9a5.4 5.6 0 0 1 10.8 0c0.6 3.4 0.4 7.4 3 9zM14.6 294.6a2 1.6 0 0 0 4 0M16.6 277v1.4M11.4 290.4h10.4" fill="none" stroke="#4a4a4e" stroke-width="0.9" stroke-linejoin="round" stroke-linecap="round" /><path d="M10.6 315.4l6-3.2l7.6 2.2v12l-6.4 4.2l-7.2-3z" fill="#eeeef0" stroke="#4a4a4e" stroke-width="0.8" stroke-linejoin="round" stroke-linecap="round" /><path d="M10.6 315.4l7.2 2.6l6.4-3.6M17.8 318v12.6M13 316.2v12M15.4 317.2v12" fill="none" stroke="#4a4a4e" stroke-width="0.7" stroke-linejoin="round" stroke-linecap="round" /><g transform="translate(7.4,349.4) scale(0.9)"><path d="M0.4 11.8C1.4 7.4 4.2 3.4 8.4 0.4C9.6 -0.2 10.6 0.6 10.6 1.8V8.6L18.6 13V15.4L11.6 18.4C10.6 18.8 9.6 18.7 8.6 18.2L0.8 13.8C0.3 13.4 0.2 12.6 0.4 11.8z" fill="#a8a8ac" stroke="#6a6a6e" stroke-width="0.8" stroke-linejoin="round" stroke-linecap="round" /><path d="M8.4 0.4C9.6 -0.2 10.6 0.6 10.6 1.8V8.6L7 10.6C7.2 6.6 7.6 3.4 8.4 0.4z" fill="#86868a" stroke="#6a6a6e" stroke-width="0.5" stroke-linejoin="round" stroke-linecap="round" /><path d="M7 10.6L10.6 8.6L18.6 13L11.4 16.2L2.2 11.4z" fill="#cacace" stroke="#6a6a6e" stroke-width="0.5" stroke-linejoin="round" stroke-linecap="round" /><ellipse cx="10.6" cy="12.6" rx="3.2" ry="1.7" fill="#86868a" stroke="#6a6a6e" stroke-width="0.5"/></g><path d="M15 348v5M15 348.6h3.4M22.6 348l3 3M25.6 348l-3 3M21.6 352.4l4 2.4v9" fill="none" stroke="#f08a28" stroke-width="0.9" stroke-linejoin="round" stroke-linecap="round" /><polygon points="7.6,390.8 14.8,386.6 24.0,390.6 24.0,394.6 16.0,399.6 7.6,395.2" fill="#d8d8dc" stroke="#4a4a4e" stroke-width="0.8" stroke-linejoin="round" /><path d="M7.6 390.8l8.4 4.2l8-4.4M16 395v4.6" fill="none" stroke="#4a4a4e" stroke-width="0.7" stroke-linejoin="round" stroke-linecap="round" /><path d="M7.6 385.4v4M7.6 386.2l7-3.6M14.6 381.8v3.6" fill="none" stroke="#f08a28" stroke-width="0.9" stroke-linejoin="round" stroke-linecap="round" /><circle cx="22.2" cy="394.4" r="3.7" fill="#fff" stroke="#2c2c30" stroke-width="1"/><path d="M19.6 397.2l-3.6 3.6" fill="none" stroke="#2c2c30" stroke-width="1.3" stroke-linejoin="round" stroke-linecap="round" /><circle cx="14.1" cy="429.6" r="6.8" fill="url(#iball)"/><rect x="13.3" y="428.2" width="1.7" height="5" fill="#fff"/><circle cx="14.15" cy="426.2" r="1" fill="#fff"/><path d="M17 420.8a8.6 8.6 0 0 1 6 6.4M18.2 418.4a11 11 0 0 1 7.4 8" fill="none" stroke="#b8b8bc" stroke-width="0.8" stroke-linejoin="round" stroke-linecap="round" /><rect x="7.4" y="453.4" width="19.2" height="18.8" fill="#f4f4f6" stroke="#5a5a5e" stroke-width="0.9"/><path d="M7.4 456.4h19.2" fill="none" stroke="#5a5a5e" stroke-width="0.8" stroke-linejoin="round" stroke-linecap="round" /><circle cx="16.8" cy="464.2" r="6.4" fill="#2a9aba" stroke="#1a7896" stroke-width="0.5"/><path d="M12.6 461.2c1.6-0.6 2.8 0.4 2.4 1.8c-0.4 1.2-1.8 1.2-1.6 2.8M18 459c0.6 1.4 2.4 1 3.2 2.4c0.6 1.2-0.8 2-0.4 3.4M15.6 467.4c1-0.8 2.6-0.4 3 1" fill="none" stroke="#bfeaf4" stroke-width="1.1" stroke-linejoin="round" stroke-linecap="round" /><circle cx="16.5" cy="497.2" r="9.2" fill="none" stroke="#4a4a4e" stroke-width="1.0"/><path d="M16.5 491.496V497.2H11.440000000000001" fill="none" stroke="#4a4a4e" stroke-width="1.0" stroke-linejoin="round" stroke-linecap="round" /><path d="M16.5 488.0v1.656M16.5 506.4v-1.656M7.300000000000001 497.2h1.656M25.7 497.2h-1.656" fill="none" stroke="#4a4a4e" stroke-width="0.8" stroke-linejoin="round" stroke-linecap="round" /><path d="M7.6 541.8v-15.4l2.4-2.2h4.6l1.6 2h10.4v15.6z" fill="#fff" stroke="#3a3a3e" stroke-width="0.9" stroke-linejoin="round" stroke-linecap="round" /><path d="M10.6 539.6l10.6-10.4M20 528l3 0.6l0.6 2.8" fill="none" stroke="#2c2c30" stroke-width="1.5" stroke-linejoin="round" stroke-linecap="round" /><path d="M23.2 539.6l-10-10.2M10.8 527.4c1.6-0.8 3.4 0 3.6 2" fill="none" stroke="#2c2c30" stroke-width="1.5" stroke-linejoin="round" stroke-linecap="round" /><rect x="8.6" y="559.8" width="6.8" height="17.6" fill="url(#rain)"/><path d="M17.2 563.2l6.6 12.4" fill="none" stroke="#141414" stroke-width="2.0" stroke-linejoin="round" stroke-linecap="round" /><path d="M15.8 560.6l1.6 3" fill="none" stroke="#f4f4f4" stroke-width="2.0" stroke-linejoin="round" stroke-linecap="round" /><path d="M10.4 596.6h3.4v13.6h-3.4z" fill="#3a7ad8" stroke="none" stroke-width="0" stroke-linejoin="round" stroke-linecap="round" /><path d="M8.8 599h6.6M8.8 602h6.6M8.8 605h6.6M8.8 608h6.6" fill="none" stroke="#8ab4f0" stroke-width="0.7" stroke-linejoin="round" stroke-linecap="round" /><path d="M8.4 611h7" fill="none" stroke="#c8c040" stroke-width="1.0" stroke-linejoin="round" stroke-linecap="round" /><path d="M17.6 598.6h8.4l-4.6 4.4z" fill="#7aa6ec" stroke="#3a6ac8" stroke-width="0.6" stroke-linejoin="round" stroke-linecap="round" /><path d="M17.4 600l6.4 11" fill="none" stroke="#141414" stroke-width="2.0" stroke-linejoin="round" stroke-linecap="round" /><path d="M16 597.4l1.6 2.8" fill="none" stroke="#f4f4f4" stroke-width="1.8" stroke-linejoin="round" stroke-linecap="round" /><polygon points="1515.0,157.4 1522.0,153.8 1529.0,157.4 1522.0,161.4" fill="url(#gt)" stroke="#5a5a5e" stroke-width="0.7" stroke-linejoin="round" /><polygon points="1515.0,157.4 1522.0,161.4 1522.0,164.4 1515.0,160.4" fill="url(#gl)" stroke="#5a5a5e" stroke-width="0.7" stroke-linejoin="round" /><polygon points="1522.0,161.4 1529.0,157.4 1529.0,160.4 1522.0,164.4" fill="url(#gd)" stroke="#5a5a5e" stroke-width="0.7" stroke-linejoin="round" /><path d="M1519 150.4v7.2a4 1.9 0 0 0 8 0v-7.2z" fill="url(#ogh)" stroke="#e07410" stroke-width="0.5"/><ellipse cx="1523" cy="150.4" rx="4" ry="1.9" fill="#ffb248" stroke="#e07410" stroke-width="0.5"/><path d="M1526 156.4l-5 11h5zM1527.6 156.4l5.4 11h-5.4z" fill="#fff" stroke="#2c2c30" stroke-width="0.9" stroke-linejoin="round" stroke-linecap="round" /><path d="M1525 155.4v12.4M1528.6 155.4v12.4" fill="none" stroke="#2c2c30" stroke-width="1.2" stroke-linejoin="round" stroke-linecap="round" /><polygon points="1515.0,183.0 1524.4,177.6 1533.6,183.0 1524.4,188.4" fill="#f9c9da" stroke="#ee8cb0" stroke-width="0.9" stroke-linejoin="round" /><rect x="1514.8" y="200" width="19" height="19.2" fill="#fff" stroke="#3a3a3e" stroke-width="0.9"/><path d="M1514.8 202.8h19" fill="none" stroke="#3a3a3e" stroke-width="0.8" stroke-linejoin="round" stroke-linecap="round" /><path d="M1517.4 208.4v-3h3M1517.6 205.6l4.2 4M1531.2 208.4v-3h-3M1531 205.6l-4.2 4M1517.4 213.6v3h3M1517.6 216.4l4.2-4M1531.2 213.6v3h-3M1531 216.4l-4.2-4" fill="none" stroke="#3a3a3e" stroke-width="0.8" stroke-linejoin="round" stroke-linecap="round" /><path d="M1514.8 234.4C1518.6 228.4 1530 228.4 1534 234.4C1530 240.4 1518.6 240.4 1514.8 234.4z" fill="none" stroke="#4a4a4e" stroke-width="0.9" stroke-linejoin="round" stroke-linecap="round" /><circle cx="1524.4" cy="234.4" r="3.3" fill="none" stroke="#4a4a4e" stroke-width="0.9"/><path d="M1515.8 242.4l16.8-16" fill="none" stroke="#4a4a4e" stroke-width="0.9" stroke-linejoin="round" stroke-linecap="round" /><path d="M1516.4 254.8l9-2.2l7.6 5.6l-4 9.6l-9 2.2c2-4.6 1.4-9.4-3.6-15.2z" fill="url(#gl)" stroke="#3a3a3e" stroke-width="0.9" stroke-linejoin="round" stroke-linecap="round" /><path d="M1525.4 252.6c-3 4.4-4.4 10-5.4 17.4" fill="none" stroke="#3a3a3e" stroke-width="0.7" stroke-linejoin="round" stroke-linecap="round" /><circle cx="1516.4" cy="254" r="1.6" fill="#f08a28"/><circle cx="1520.4" cy="256.8" r="1.5" fill="#f08a28"/><circle cx="1524.6" cy="259.4" r="1.5" fill="#f08a28"/><circle cx="1524.3" cy="285.5" r="9.4" fill="#fff" stroke="#3a3a3e" stroke-width="0.9"/><path d="M1521.4 281v9l7.6-4.5z" fill="none" stroke="#3a3a3e" stroke-width="0.9" stroke-linejoin="round" stroke-linecap="round" /><path d="M1515 321.6c0.6-3.4 3-4.6 6.4-5.2v-2.4M1533.8 321.6c-0.6-3.4-3-4.6-6.4-5.2v-2.4" fill="none" stroke="#3a3a3e" stroke-width="0.9" stroke-linejoin="round" stroke-linecap="round" /><path d="M1519.4 309.4c0-8.4 10-8.4 10 0c0 3.2-2 6-5 6s-5-2.800-5-6z" fill="#fff" stroke="#3a3a3e" stroke-width="0.9" stroke-linejoin="round" stroke-linecap="round" /><rect x="1518.2" y="307" width="12.4" height="4.2" rx="1.6" fill="#8a8a8e" stroke="#3a3a3e" stroke-width="0.7"/><path d="M1520 305.4c1.6-1 7.200-1 8.800 0" fill="none" stroke="#3a3a3e" stroke-width="0.7" stroke-linejoin="round" stroke-linecap="round" /><polygon points="1515.0,336.0 1523.0,332.0 1531.0,336.0 1523.0,340.4" fill="url(#gt)" stroke="#5a5a5e" stroke-width="0.7" stroke-linejoin="round" /><polygon points="1515.0,336.0 1523.0,340.4 1523.0,343.4 1515.0,339.0" fill="url(#gl)" stroke="#5a5a5e" stroke-width="0.7" stroke-linejoin="round" /><polygon points="1523.0,340.4 1531.0,336.0 1531.0,339.0 1523.0,343.4" fill="url(#gd)" stroke="#5a5a5e" stroke-width="0.7" stroke-linejoin="round" /><path d="M1519.0 328.4v7.4a4.4 2 0 0 0 8.8 0v-7.4z" fill="url(#ogh)" stroke="#e07410" stroke-width="0.5"/><ellipse cx="1523.4" cy="328.4" rx="4.4" ry="2" fill="#ffb248" stroke="#e07410" stroke-width="0.5"/><path d="M1521.4 345.4l6.6-6.200c-0.600-2.600 1.400-4.600 4-4l-2 2.200l0.600 1.800l1.800 0.400l2-2.200c0.800 2.600-1.400 4.800-4 4l-6.600 6.200c-1.600 0.600-3-0.800-2.400-2.200z" fill="#fff" stroke="#2c2c30" stroke-width="0.9" stroke-linejoin="round" stroke-linecap="round" /><polygon points="1522.2,355.8 1526.6,358.2 1526.6,362.6 1522.2,360.2" fill="#f0f0f2" stroke="#a8a8ac" stroke-width="0.6" stroke-linejoin="round" /><polygon points="1531.0,355.8 1526.6,358.2 1526.6,362.6 1531.0,360.2" fill="#dededf" stroke="#a8a8ac" stroke-width="0.6" stroke-linejoin="round" /><polygon points="1522.2,355.8 1526.6,353.4 1531.0,355.8 1526.6,358.2" fill="#fafafa" stroke="#a8a8ac" stroke-width="0.6" stroke-linejoin="round" /><polygon points="1517.8,358.0 1522.2,360.4 1522.2,364.8 1517.8,362.4" fill="#f0f0f2" stroke="#a8a8ac" stroke-width="0.6" stroke-linejoin="round" /><polygon points="1526.6,358.0 1522.2,360.4 1522.2,364.8 1526.6,362.4" fill="#dededf" stroke="#a8a8ac" stroke-width="0.6" stroke-linejoin="round" /><polygon points="1517.8,358.0 1522.2,355.6 1526.6,358.0 1522.2,360.4" fill="#fafafa" stroke="#a8a8ac" stroke-width="0.6" stroke-linejoin="round" /><polygon points="1517.6,363.2 1522.2,365.8 1522.2,370.8 1517.6,368.2" fill="#f4821a" stroke="#c86414" stroke-width="0.5" stroke-linejoin="round" /><polygon points="1526.8,363.2 1522.2,365.8 1522.2,370.8 1526.8,368.2" fill="#e86c0e" stroke="#c86414" stroke-width="0.5" stroke-linejoin="round" /><polygon points="1517.6,363.2 1522.2,360.6 1526.8,363.2 1522.2,365.8" fill="url(#og)" stroke="#c86414" stroke-width="0.5" stroke-linejoin="round" /><polygon points="1515.0,387.4 1521.4,390.6 1521.4,395.8 1515.0,392.6" fill="url(#gl)" stroke="#4a4a4e" stroke-width="0.8" stroke-linejoin="round" /><polygon points="1527.8,387.4 1521.4,390.6 1521.4,395.8 1527.8,392.6" fill="url(#gd)" stroke="#4a4a4e" stroke-width="0.8" stroke-linejoin="round" /><polygon points="1515.0,387.4 1521.4,384.2 1527.8,387.4 1521.4,390.6" fill="url(#gt)" stroke="#4a4a4e" stroke-width="0.8" stroke-linejoin="round" /><polygon points="1520.2,382.0 1526.8,385.4 1526.8,392.8 1520.2,389.4" fill="#f4821a" stroke="#d06410" stroke-width="0.5" stroke-linejoin="round" /><polygon points="1533.4,382.0 1526.8,385.4 1526.8,392.8 1533.4,389.4" fill="#e86c0e" stroke="#d06410" stroke-width="0.5" stroke-linejoin="round" /><polygon points="1520.2,382.0 1526.8,378.6 1533.4,382.0 1526.8,385.4" fill="url(#og)" stroke="#d06410" stroke-width="0.5" stroke-linejoin="round" /><ellipse cx="1523.4" cy="387.2" rx="1.7" ry="1.5" fill="#fde0c0"/><ellipse cx="1530.2" cy="387.2" rx="1.7" ry="1.5" fill="#fde0c0"/><ellipse cx="1526.8" cy="382" rx="1.7" ry="1.5" fill="#fde0c0"/><rect x="1514" y="406.4" width="21" height="0.9" fill="#d4d4d8"/></svg>
<svg class="b" style="left:0px;top:0px;" width="1536" height="865" viewBox="0 0 1536 865"><defs><linearGradient id="bev" x1="0" y1="0" x2="0" y2="1"><stop offset="0" stop-color="#bdbcbe"/><stop offset="0.35" stop-color="#cccbcd"/><stop offset="1" stop-color="#c4c3c5"/></linearGradient><linearGradient id="lw" x1="0" y1="0" x2="1" y2="0"><stop offset="0" stop-color="#858386"/><stop offset="1" stop-color="#908e91"/></linearGradient><linearGradient id="btm" x1="0" y1="0" x2="0" y2="1"><stop offset="0" stop-color="#6b696c"/><stop offset="0.45" stop-color="#3f3e40"/><stop offset="1" stop-color="#2e2d2f"/></linearGradient><radialGradient id="hs" cx="0.35" cy="0.3" r="0.8"><stop offset="0" stop-color="#4c4b4d"/><stop offset="1" stop-color="#7b797c"/></radialGradient></defs><polygon points="657.3,711.5 885.4,714.5 884.8,719.8 881,721.8 662,719.8 658.2,717.6" fill="url(#btm)"/><polygon points="665.3,309 665.6,306.6 667.2,305 675.8,305 684.5,295.4 695.5,295.4 705.9,304.9 711.7,304.5 843.6,306.4 850.6,309.3 861,298.1 874.8,298.1 884,307 890.6,308.6 892.6,311 892.7,314 885.4,714.8 657.3,712.3" fill="#9d9b9e" stroke="#6d6b6e" stroke-width="0.8" stroke-linejoin="round"/><polygon points="665.3,308 669.6,306 663,712.3 657.3,712.3" fill="#9f9da0"/><polygon points="887.6,309 892.7,313 885.4,714.8 881,714.7" fill="#a2a0a3"/><polygon points="675.8,305 684.5,295.4 695.5,295.4 705.9,304.9 703.5,305.6 694.6,298 685.6,298 678,305.8" fill="#c2c1c3"/><polygon points="850.6,309.3 861,298.1 874.8,298.1 884,307 881.6,308 873.8,300.8 862.2,300.8 853.2,310.2" fill="#c2c1c3"/><polygon points="665.6,306.6 667.2,305 675.8,305 678,305.8 676,308 668,308.4" fill="#b2b1b3"/><polygon points="884,307 890.6,308.6 892.6,311 888,311.5 881.6,308" fill="#d0cfd1"/><polygon points="705.9,304.9 711.7,304.5 713.2,307.4 704,307.6" fill="#b6b5b7"/><polygon points="843.6,306.4 850.6,309.3 851.4,311.4 842.4,309" fill="#c9c8ca"/><polygon points="705.2,307.5 711.7,304.5 718.6,316 712.5,529 706,568 703.6,712.6 700.6,712.6 703,568" fill="url(#lw)"/><polygon points="843.6,306.4 839,317 834,530 841,568 838,713.9 842.4,714 845.4,568 849.6,309.6" fill="#aba9ac"/><polygon points="711.7,304.5 843.6,306.4 839,317 718.6,316" fill="url(#bev)" stroke="#77757a" stroke-width="0.5"/><polygon points="712.5,529 834,530 841,568 706,568" fill="#868487" stroke="#5b595c" stroke-width="0.5"/><line x1="718.6" y1="316" x2="712.5" y2="529" stroke="#4e4c50" stroke-width="0.7" opacity="1"/><line x1="839" y1="317" x2="834" y2="530" stroke="#4e4c50" stroke-width="0.7" opacity="1"/><line x1="718.6" y1="316" x2="839" y2="317" stroke="#4e4c50" stroke-width="0.7" opacity="1"/><line x1="706" y1="568" x2="703.6" y2="712.6" stroke="#4e4c50" stroke-width="0.7" opacity="1"/><line x1="841" y1="568" x2="838" y2="713.9" stroke="#4e4c50" stroke-width="0.7" opacity="1"/><line x1="703.2" y1="306.5" x2="696.6" y2="712.5" stroke="#4e4c50" stroke-width="0.7" opacity="1"/><line x1="705.3" y1="307" x2="700.3" y2="712.6" stroke="#4e4c50" stroke-width="0.7" opacity="1"/><line x1="850.4" y1="310" x2="846.2" y2="714.2" stroke="#4e4c50" stroke-width="0.7" opacity="1"/><line x1="848.4" y1="309.5" x2="843.4" y2="714.1" stroke="#4e4c50" stroke-width="0.7" opacity="1"/><line x1="669.4" y1="306.4" x2="662.6" y2="712.4" stroke="#4e4c50" stroke-width="0.7" opacity="1"/><line x1="670.9" y1="306.4" x2="664.2" y2="712.4" stroke="#4e4c50" stroke-width="0.7" opacity="1"/><line x1="886.2" y1="309.4" x2="880.2" y2="714.6" stroke="#4e4c50" stroke-width="0.7" opacity="1"/><line x1="888.2" y1="310.6" x2="882.4" y2="714.7" stroke="#4e4c50" stroke-width="0.7" opacity="1"/><line x1="703.6" y1="712.6" x2="838" y2="713.9" stroke="#4e4c50" stroke-width="0.7" opacity="1"/><line x1="657.3" y1="712.3" x2="885.4" y2="714.8" stroke="#5a585b" stroke-width="0.6" opacity="1"/><ellipse cx="685.5" cy="325.40000000000003" rx="10.4" ry="10.3" fill="url(#hs)"/><ellipse cx="686.7" cy="326.90000000000003" rx="9.1" ry="9.1" fill="#ffffff" stroke="#545255" stroke-width="0.6"/><ellipse cx="682.6999999999999" cy="444.3" rx="10.4" ry="10.3" fill="url(#hs)"/><ellipse cx="683.9" cy="445.8" rx="9.1" ry="9.1" fill="#ffffff" stroke="#545255" stroke-width="0.6"/><ellipse cx="680.1999999999999" cy="563.1" rx="10.4" ry="10.3" fill="url(#hs)"/><ellipse cx="681.4" cy="564.6" rx="9.1" ry="9.1" fill="#ffffff" stroke="#545255" stroke-width="0.6"/><ellipse cx="677.9" cy="681.5" rx="10.4" ry="10.3" fill="url(#hs)"/><ellipse cx="679.1" cy="683.0" rx="9.1" ry="9.1" fill="#ffffff" stroke="#545255" stroke-width="0.6"/><ellipse cx="870.5999999999999" cy="327.1" rx="10.4" ry="10.3" fill="url(#hs)"/><ellipse cx="871.8" cy="328.6" rx="9.1" ry="9.1" fill="#ffffff" stroke="#545255" stroke-width="0.6"/><ellipse cx="868.3" cy="446.1" rx="10.4" ry="10.3" fill="url(#hs)"/><ellipse cx="869.5" cy="447.6" rx="9.1" ry="9.1" fill="#ffffff" stroke="#545255" stroke-width="0.6"/><ellipse cx="866.0999999999999" cy="564.9" rx="10.4" ry="10.3" fill="url(#hs)"/><ellipse cx="867.3" cy="566.4" rx="9.1" ry="9.1" fill="#ffffff" stroke="#545255" stroke-width="0.6"/><ellipse cx="863.8" cy="683.6" rx="10.4" ry="10.3" fill="url(#hs)"/><ellipse cx="865.0" cy="685.1" rx="9.1" ry="9.1" fill="#ffffff" stroke="#545255" stroke-width="0.6"/><path d="M775 271.3H785M780 266.3V276.3" stroke="#3b4be0" stroke-width="1.1" fill="none"/><path d="M652.5 717H661.5M657 712.5V721.5" stroke="#3b4be0" stroke-width="1.1" fill="none"/></svg>
<svg class="b" style="left:0px;top:0px;" width="1536" height="865" viewBox="0 0 1536 865"><polygon points="1126.5,275 1136.8,275 1147,264.9 1162.6,264.9 1173,275 1335.9,275 1346.6,264.9 1361,264.9 1371.7,275 1382.2,275 1382.2,743.8 1126.5,743.8" fill="#9ea4aa"/><polygon points="1180.3,275 1193.5,275 1193.5,522.4 1185.1,573.8 1187,738 1180.3,743.8" fill="#a5abb2"/><polygon points="1328.6,275 1314.4,275 1314.4,522.4 1322.8,573.8 1322.9,738 1328.6,743.8" fill="#8b9098"/><polygon points="1180.3,743.8 1187,738 1322.9,738 1328.6,743.8" fill="#9399a0"/><polygon points="1185.6,275.3 1322.5,275.3 1314.4,280 1193.5,280" fill="#696d75"/><polygon points="1193.5,522.4 1314.4,522.4 1322.8,573.8 1185.1,573.8" fill="#a2a9ac"/><line x1="1180.3" y1="275" x2="1180.3" y2="743.8" stroke="#52555d" stroke-width="0.9" opacity="1"/><line x1="1328.6" y1="275" x2="1328.6" y2="743.8" stroke="#52555d" stroke-width="0.9" opacity="1"/><line x1="1193.5" y1="280" x2="1193.5" y2="522.4" stroke="#52555d" stroke-width="0.9" opacity="1"/><line x1="1314.4" y1="280" x2="1314.4" y2="522.4" stroke="#52555d" stroke-width="0.9" opacity="1"/><line x1="1193.5" y1="280" x2="1314.4" y2="280" stroke="#52555d" stroke-width="0.9" opacity="1"/><line x1="1193.5" y1="522.4" x2="1314.4" y2="522.4" stroke="#52555d" stroke-width="0.9" opacity="1"/><line x1="1193.5" y1="522.4" x2="1185.1" y2="573.8" stroke="#52555d" stroke-width="0.9" opacity="1"/><line x1="1314.4" y1="522.4" x2="1322.8" y2="573.8" stroke="#52555d" stroke-width="0.9" opacity="1"/><line x1="1185.1" y1="573.8" x2="1322.8" y2="573.8" stroke="#52555d" stroke-width="0.9" opacity="1"/><line x1="1185.1" y1="573.8" x2="1187" y2="738" stroke="#52555d" stroke-width="0.9" opacity="1"/><line x1="1322.8" y1="573.8" x2="1322.9" y2="738" stroke="#52555d" stroke-width="0.9" opacity="1"/><line x1="1187" y1="738" x2="1322.9" y2="738" stroke="#52555d" stroke-width="0.9" opacity="1"/><line x1="1180.3" y1="743.8" x2="1187" y2="738" stroke="#52555d" stroke-width="0.9" opacity="1"/><line x1="1328.6" y1="743.8" x2="1322.9" y2="738" stroke="#52555d" stroke-width="0.9" opacity="1"/><line x1="1185.6" y1="275.3" x2="1193.5" y2="280" stroke="#52555d" stroke-width="0.9" opacity="1"/><line x1="1322.5" y1="275.3" x2="1314.4" y2="280" stroke="#52555d" stroke-width="0.9" opacity="1"/><polyline points="1126.5,275 1136.8,275 1147,264.9 1162.6,264.9 1173,275 1335.9,275 1346.6,264.9 1361,264.9 1371.7,275 1382.2,275" fill="none" stroke="#4d5296" stroke-width="1.1" stroke-linejoin="round"/><polyline points="1126.5,743.8 1126.5,275" fill="none" stroke="#555a86" stroke-width="1.1"/><polyline points="1126.5,743.8 1330,743.8" fill="none" stroke="#4d5296" stroke-width="1.1"/><polyline points="1382.2,275 1382.2,743.8" fill="none" stroke="#5562e6" stroke-width="1.5"/><polyline points="1382.2,690 1382.2,743.8 1330,743.8" fill="none" stroke="#d9d4ee" stroke-width="1.2"/><circle cx="1149.4" cy="299.5" r="10.9" fill="#fff" stroke="#5d5f66" stroke-width="0.7"/><circle cx="1149.4" cy="434" r="10.9" fill="#fff" stroke="#5d5f66" stroke-width="0.7"/><circle cx="1149.4" cy="568.6" r="10.9" fill="#fff" stroke="#5d5f66" stroke-width="0.7"/><circle cx="1149.4" cy="703" r="10.9" fill="#fff" stroke="#5d5f66" stroke-width="0.7"/><rect x="1348.6" y="710" width="33.6" height="33.8" fill="none" stroke="#dcdcec" stroke-width="1"/><path d="M1377.5 744H1386.5M1382 739.5V748.5" stroke="#a03a3a" stroke-width="1.2" fill="none"/><path d="M1379 669.5l6 6M1385 669.5l-6 6" stroke="#dfe2f6" stroke-width="0.9" fill="none"/><path d="M1380.8 690l1.4-9l1.6 9z" fill="#b4a0a8"/><path d="M1307.5 741l3 3l3-3M1310.5 744v3.6" stroke="#e6e6ee" stroke-width="0.9" fill="none"/><path d="M1327 745.4l-9-1.6l9-1.4z" fill="#f0e6ea" stroke="#b09aa0" stroke-width="0.4"/></svg>
<svg class="b" style="left:0;top:0" width="1536" height="865"><polygon points="536.8,760.8 566.8,759.8 567.8,789.8 537.8,790.8" fill="#fdfdfd" stroke="#c4c4c4" stroke-width="0.8"/><polygon points="537.8,787.8 567.8,786.8 567.8,789.8 537.8,790.8" fill="#f1f1f1" stroke="#d0d0d0" stroke-width="0.5"/><path d="M552.6 759.8V742" stroke="#c8303c" stroke-width="3"/><path d="M549.4 743L552.6 728.5L555.8000000000001 743z" fill="#c8303c"/><path d="M536.8 775H517.6" stroke="#2f9a36" stroke-width="3"/><path d="M518.1 771.8L503.6 775L518.1 778.2z" fill="#2f9a36"/></svg>
<svg class="b" style="left:0;top:0" width="1536" height="865"><ellipse cx="549.6" cy="771.6" rx="3.3" ry="3.6" fill="#1838d8"/><path d="M547 766h4l-4 2.6" stroke="#5a72e0" stroke-width="0.7" fill="none"/></svg>
<span class="t " style="left:549px;top:710px;font-size:9.4px;color:#cc5874;transform:translateX(0.66px);">X</span>
<span class="t " style="left:492px;top:765px;font-size:9.4px;color:#7fae86;transform:translateX(0.86px);">Y</span>
<svg class="b" style="left:0;top:0" width="1536" height="865"><rect x="1055" y="761.6" width="28.6" height="28.6" fill="#fff" stroke="#bdbdbd" stroke-width="0.9"/><path d="M1069 761.6V742" stroke="#c8303c" stroke-width="3"/><path d="M1065.8 743L1069 728.5L1072.2 743z" fill="#c8303c"/><path d="M1055 775H1034" stroke="#2f9a36" stroke-width="3"/><path d="M1034.5 771.8L1020 775L1034.5 778.2z" fill="#2f9a36"/></svg>
<svg class="b" style="left:0;top:0" width="1536" height="865"><circle cx="1069" cy="775.4" r="3.1" fill="#1838d8"/></svg>
<span class="t " style="left:1066px;top:710px;font-size:8.6px;color:#cc5874;transform:translateX(0.13px);">X</span>
<span class="t " style="left:1010px;top:766px;font-size:8.6px;color:#7fae86;transform:translateX(0.33px);">Y</span>
<svg class="b" style="left:0px;top:0px;" width="1536" height="865" viewBox="0 0 1536 865"><circle cx="1030.8" cy="589.5" r="22" fill="none" stroke="#161616" stroke-width="1.6" stroke-dasharray="18.8 15.76" stroke-dashoffset="-7.88"/><path d="M1003.1999999999999 587.3h25.400000000000002v-25.400000000000002h4.4v25.400000000000002h25.400000000000002v4.4h-25.400000000000002v25.400000000000002h-4.4v-25.400000000000002h-25.400000000000002z" fill="#dedede" stroke="#161616" stroke-width="1.6"/></svg>
</div></div></body></html>
